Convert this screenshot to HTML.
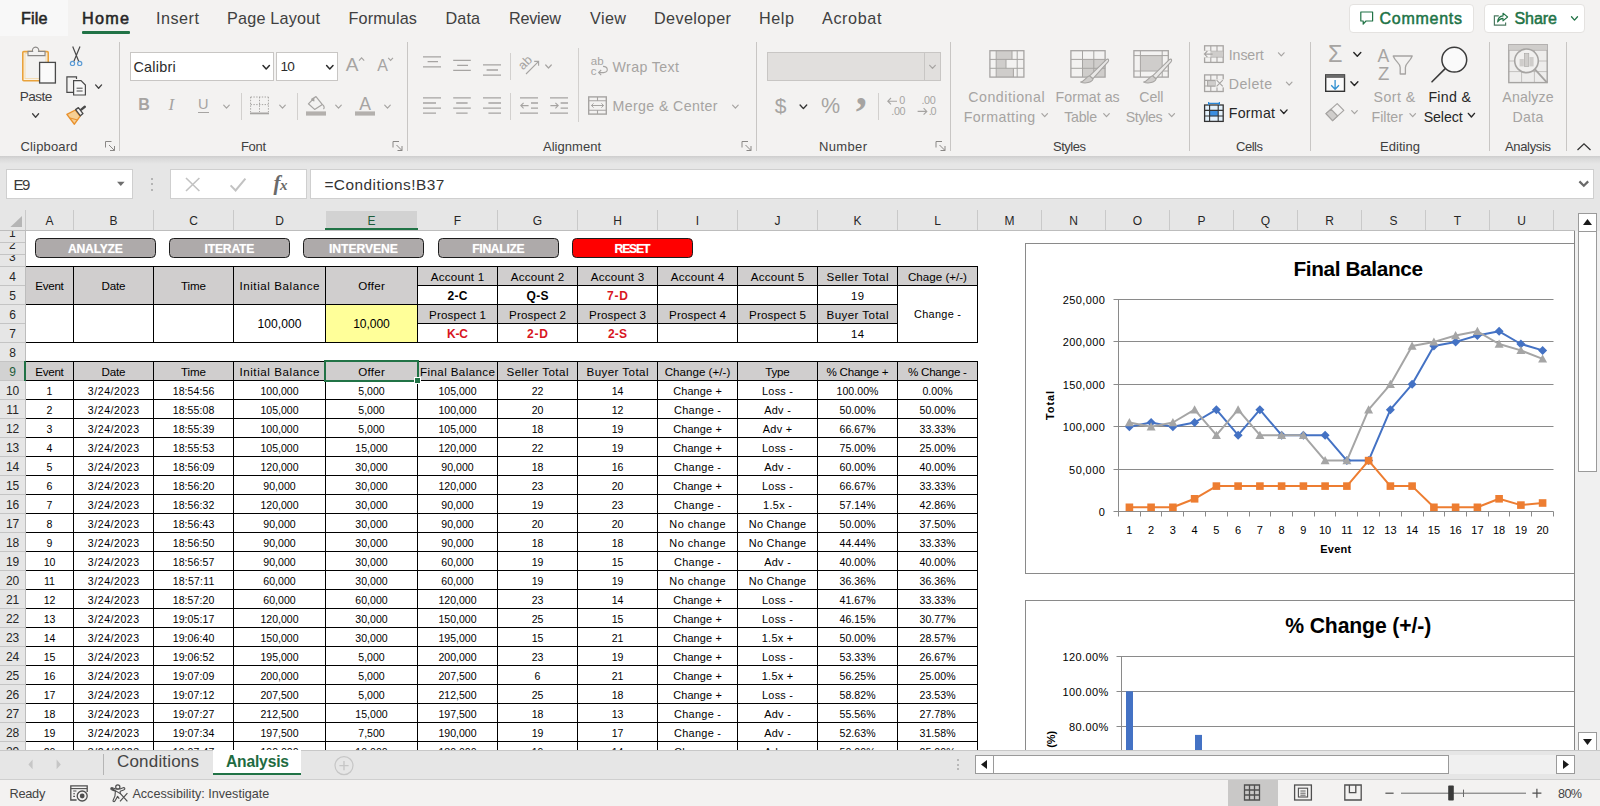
<!DOCTYPE html>
<html><head><meta charset="utf-8"><title>Analysis - Excel</title><style>
html,body{margin:0;padding:0}
body{width:1600px;height:806px;position:relative;overflow:hidden;background:#e6e6e6;font-family:"Liberation Sans",sans-serif;color:#000}
div,span,svg{position:absolute;box-sizing:border-box}
.t{white-space:nowrap;line-height:20px;height:20px}
.rel{position:static}
</style></head>
<body>
<div style="left:26px;top:231px;width:1549px;height:520px;background:#fff;"></div>
<div style="left:0px;top:207px;width:1575px;height:24px;background:#e6e6e6;"></div>
<div style="left:326px;top:211px;width:91px;height:18px;background:#d2d2d2;"></div>
<div style="left:325px;top:228px;width:93px;height:2px;background:#217346;"></div>
<span class="t" style="left:45.50px;top:210.60px;font-size:12px;color:#262626;">A</span>
<span class="t" style="left:109.50px;top:210.60px;font-size:12px;color:#262626;">B</span>
<span class="t" style="left:189.17px;top:210.60px;font-size:12px;color:#262626;">C</span>
<span class="t" style="left:275.17px;top:210.60px;font-size:12px;color:#262626;">D</span>
<span class="t" style="left:367.50px;top:210.60px;font-size:12px;color:#1e5c3a;">E</span>
<span class="t" style="left:453.83px;top:210.60px;font-size:12px;color:#262626;">F</span>
<span class="t" style="left:532.83px;top:210.60px;font-size:12px;color:#262626;">G</span>
<span class="t" style="left:613.17px;top:210.60px;font-size:12px;color:#262626;">H</span>
<span class="t" style="left:695.83px;top:210.60px;font-size:12px;color:#262626;">I</span>
<span class="t" style="left:774.50px;top:210.60px;font-size:12px;color:#262626;">J</span>
<span class="t" style="left:853.50px;top:210.60px;font-size:12px;color:#262626;">K</span>
<span class="t" style="left:934.16px;top:210.60px;font-size:12px;color:#262626;">L</span>
<span class="t" style="left:1004.50px;top:210.60px;font-size:12px;color:#262626;">M</span>
<span class="t" style="left:1069.17px;top:210.60px;font-size:12px;color:#262626;">N</span>
<span class="t" style="left:1132.83px;top:210.60px;font-size:12px;color:#262626;">O</span>
<span class="t" style="left:1197.50px;top:210.60px;font-size:12px;color:#262626;">P</span>
<span class="t" style="left:1260.83px;top:210.60px;font-size:12px;color:#262626;">Q</span>
<span class="t" style="left:1325.17px;top:210.60px;font-size:12px;color:#262626;">R</span>
<span class="t" style="left:1389.50px;top:210.60px;font-size:12px;color:#262626;">S</span>
<span class="t" style="left:1453.83px;top:210.60px;font-size:12px;color:#262626;">T</span>
<span class="t" style="left:1517.17px;top:210.60px;font-size:12px;color:#262626;">U</span>
<div style="left:25px;top:210px;width:1px;height:21px;background:#c9c9c9;"></div>
<div style="left:73px;top:210px;width:1px;height:21px;background:#c9c9c9;"></div>
<div style="left:153px;top:210px;width:1px;height:21px;background:#c9c9c9;"></div>
<div style="left:233px;top:210px;width:1px;height:21px;background:#c9c9c9;"></div>
<div style="left:497px;top:210px;width:1px;height:21px;background:#c9c9c9;"></div>
<div style="left:577px;top:210px;width:1px;height:21px;background:#c9c9c9;"></div>
<div style="left:657px;top:210px;width:1px;height:21px;background:#c9c9c9;"></div>
<div style="left:737px;top:210px;width:1px;height:21px;background:#c9c9c9;"></div>
<div style="left:817px;top:210px;width:1px;height:21px;background:#c9c9c9;"></div>
<div style="left:897px;top:210px;width:1px;height:21px;background:#c9c9c9;"></div>
<div style="left:977px;top:210px;width:1px;height:21px;background:#c9c9c9;"></div>
<div style="left:1041px;top:210px;width:1px;height:21px;background:#c9c9c9;"></div>
<div style="left:1105px;top:210px;width:1px;height:21px;background:#c9c9c9;"></div>
<div style="left:1169px;top:210px;width:1px;height:21px;background:#c9c9c9;"></div>
<div style="left:1233px;top:210px;width:1px;height:21px;background:#c9c9c9;"></div>
<div style="left:1297px;top:210px;width:1px;height:21px;background:#c9c9c9;"></div>
<div style="left:1361px;top:210px;width:1px;height:21px;background:#c9c9c9;"></div>
<div style="left:1425px;top:210px;width:1px;height:21px;background:#c9c9c9;"></div>
<div style="left:1489px;top:210px;width:1px;height:21px;background:#c9c9c9;"></div>
<div style="left:1553px;top:210px;width:1px;height:21px;background:#c9c9c9;"></div>
<div style="left:0px;top:230px;width:1575px;height:1px;background:#bdbdbd;"></div>
<svg style="left:9px;top:214px" width="14" height="14" viewBox="0 0 14 14"><path d="M13 2 L13 13 L1.4 13 Z" fill="#b5b5b5"/></svg>
<div style="left:0px;top:231px;width:25px;height:520px;background:#e6e6e6;"></div>
<div style="left:25px;top:231px;width:1px;height:520px;background:#bdbdbd;"></div>
<div style="left:0px;top:362px;width:25px;height:18px;background:#d2d2d2;"></div>
<div style="left:0px;top:242px;width:25px;height:1px;background:#c4c4c4;"></div>
<div style="left:0px;top:254px;width:25px;height:1px;background:#c4c4c4;"></div>
<div style="left:0px;top:266px;width:25px;height:1px;background:#c4c4c4;"></div>
<div style="left:0px;top:285px;width:25px;height:1px;background:#c4c4c4;"></div>
<div style="left:0px;top:304px;width:25px;height:1px;background:#c4c4c4;"></div>
<div style="left:0px;top:323px;width:25px;height:1px;background:#c4c4c4;"></div>
<div style="left:0px;top:342px;width:25px;height:1px;background:#c4c4c4;"></div>
<div style="left:0px;top:361px;width:25px;height:1px;background:#c4c4c4;"></div>
<div style="left:0px;top:380px;width:25px;height:1px;background:#c4c4c4;"></div>
<div style="left:0px;top:399px;width:25px;height:1px;background:#c4c4c4;"></div>
<div style="left:0px;top:418px;width:25px;height:1px;background:#c4c4c4;"></div>
<div style="left:0px;top:437px;width:25px;height:1px;background:#c4c4c4;"></div>
<div style="left:0px;top:456px;width:25px;height:1px;background:#c4c4c4;"></div>
<div style="left:0px;top:475px;width:25px;height:1px;background:#c4c4c4;"></div>
<div style="left:0px;top:494px;width:25px;height:1px;background:#c4c4c4;"></div>
<div style="left:0px;top:513px;width:25px;height:1px;background:#c4c4c4;"></div>
<div style="left:0px;top:532px;width:25px;height:1px;background:#c4c4c4;"></div>
<div style="left:0px;top:551px;width:25px;height:1px;background:#c4c4c4;"></div>
<div style="left:0px;top:570px;width:25px;height:1px;background:#c4c4c4;"></div>
<div style="left:0px;top:589px;width:25px;height:1px;background:#c4c4c4;"></div>
<div style="left:0px;top:608px;width:25px;height:1px;background:#c4c4c4;"></div>
<div style="left:0px;top:627px;width:25px;height:1px;background:#c4c4c4;"></div>
<div style="left:0px;top:646px;width:25px;height:1px;background:#c4c4c4;"></div>
<div style="left:0px;top:665px;width:25px;height:1px;background:#c4c4c4;"></div>
<div style="left:0px;top:684px;width:25px;height:1px;background:#c4c4c4;"></div>
<div style="left:0px;top:703px;width:25px;height:1px;background:#c4c4c4;"></div>
<div style="left:0px;top:722px;width:25px;height:1px;background:#c4c4c4;"></div>
<div style="left:0px;top:741px;width:25px;height:1px;background:#c4c4c4;"></div>
<div style="left:0px;top:760px;width:25px;height:1px;background:#c4c4c4;"></div>
<div style="left:24px;top:361px;width:2px;height:20px;background:#217346;"></div>
<div style="left:0;top:231px;width:25px;height:11px;overflow:hidden"><span class="t" style="left:9.1px;top:-7.7px;font-size:12px;color:#262626">1</span></div>
<div style="left:0;top:243px;width:25px;height:11px;overflow:hidden"><span class="t" style="left:9.1px;top:-7.7px;font-size:12px;color:#262626">2</span></div>
<div style="left:0;top:255px;width:25px;height:11px;overflow:hidden"><span class="t" style="left:9.1px;top:-7.7px;font-size:12px;color:#262626">3</span></div>
<span class="t" style="left:9.26px;top:266.50px;font-size:12px;color:#262626;">4</span>
<span class="t" style="left:9.26px;top:285.50px;font-size:12px;color:#262626;">5</span>
<span class="t" style="left:9.26px;top:304.50px;font-size:12px;color:#262626;">6</span>
<span class="t" style="left:9.26px;top:323.50px;font-size:12px;color:#262626;">7</span>
<span class="t" style="left:9.26px;top:342.50px;font-size:12px;color:#262626;">8</span>
<span class="t" style="left:9.26px;top:361.50px;font-size:12px;color:#1e5c3a;">9</span>
<span class="t" style="left:5.93px;top:380.50px;font-size:12px;color:#262626;">10</span>
<span class="t" style="left:6.37px;top:399.50px;font-size:12px;color:#262626;">11</span>
<span class="t" style="left:5.93px;top:418.50px;font-size:12px;color:#262626;">12</span>
<span class="t" style="left:5.93px;top:437.50px;font-size:12px;color:#262626;">13</span>
<span class="t" style="left:5.93px;top:456.50px;font-size:12px;color:#262626;">14</span>
<span class="t" style="left:5.93px;top:475.50px;font-size:12px;color:#262626;">15</span>
<span class="t" style="left:5.93px;top:494.50px;font-size:12px;color:#262626;">16</span>
<span class="t" style="left:5.93px;top:513.50px;font-size:12px;color:#262626;">17</span>
<span class="t" style="left:5.93px;top:532.50px;font-size:12px;color:#262626;">18</span>
<span class="t" style="left:5.93px;top:551.50px;font-size:12px;color:#262626;">19</span>
<span class="t" style="left:5.93px;top:570.50px;font-size:12px;color:#262626;">20</span>
<span class="t" style="left:5.93px;top:589.50px;font-size:12px;color:#262626;">21</span>
<span class="t" style="left:5.93px;top:608.50px;font-size:12px;color:#262626;">22</span>
<span class="t" style="left:5.93px;top:627.50px;font-size:12px;color:#262626;">23</span>
<span class="t" style="left:5.93px;top:646.50px;font-size:12px;color:#262626;">24</span>
<span class="t" style="left:5.93px;top:665.50px;font-size:12px;color:#262626;">25</span>
<span class="t" style="left:5.93px;top:684.50px;font-size:12px;color:#262626;">26</span>
<span class="t" style="left:5.93px;top:703.50px;font-size:12px;color:#262626;">27</span>
<span class="t" style="left:5.93px;top:722.50px;font-size:12px;color:#262626;">28</span>
<span class="t" style="left:5.93px;top:741.50px;font-size:12px;color:#262626;">29</span>
<div style="left:26px;top:267px;width:47px;height:37px;background:#d0cece;"></div>
<div style="left:74px;top:267px;width:79px;height:37px;background:#d0cece;"></div>
<div style="left:154px;top:267px;width:79px;height:37px;background:#d0cece;"></div>
<div style="left:234px;top:267px;width:91px;height:37px;background:#d0cece;"></div>
<div style="left:326px;top:267px;width:91px;height:37px;background:#d0cece;"></div>
<div style="left:326px;top:305px;width:91px;height:37px;background:#ffff99;"></div>
<div style="left:418px;top:267px;width:79px;height:18px;background:#d0cece;"></div>
<div style="left:418px;top:305px;width:79px;height:18px;background:#d0cece;"></div>
<div style="left:498px;top:267px;width:79px;height:18px;background:#d0cece;"></div>
<div style="left:498px;top:305px;width:79px;height:18px;background:#d0cece;"></div>
<div style="left:578px;top:267px;width:79px;height:18px;background:#d0cece;"></div>
<div style="left:578px;top:305px;width:79px;height:18px;background:#d0cece;"></div>
<div style="left:658px;top:267px;width:79px;height:18px;background:#d0cece;"></div>
<div style="left:658px;top:305px;width:79px;height:18px;background:#d0cece;"></div>
<div style="left:738px;top:267px;width:79px;height:18px;background:#d0cece;"></div>
<div style="left:738px;top:305px;width:79px;height:18px;background:#d0cece;"></div>
<div style="left:818px;top:267px;width:79px;height:18px;background:#d0cece;"></div>
<div style="left:818px;top:305px;width:79px;height:18px;background:#d0cece;"></div>
<div style="left:898px;top:267px;width:79px;height:18px;background:#d0cece;"></div>
<div style="left:26px;top:362px;width:47px;height:18px;background:#d0cece;"></div>
<div style="left:74px;top:362px;width:79px;height:18px;background:#d0cece;"></div>
<div style="left:154px;top:362px;width:79px;height:18px;background:#d0cece;"></div>
<div style="left:234px;top:362px;width:91px;height:18px;background:#d0cece;"></div>
<div style="left:326px;top:362px;width:91px;height:18px;background:#d0cece;"></div>
<div style="left:418px;top:362px;width:79px;height:18px;background:#d0cece;"></div>
<div style="left:498px;top:362px;width:79px;height:18px;background:#d0cece;"></div>
<div style="left:578px;top:362px;width:79px;height:18px;background:#d0cece;"></div>
<div style="left:658px;top:362px;width:79px;height:18px;background:#d0cece;"></div>
<div style="left:738px;top:362px;width:79px;height:18px;background:#d0cece;"></div>
<div style="left:818px;top:362px;width:79px;height:18px;background:#d0cece;"></div>
<div style="left:898px;top:362px;width:79px;height:18px;background:#d0cece;"></div>
<div style="left:26px;top:266px;width:952px;height:1px;background:#000;"></div>
<div style="left:417px;top:285px;width:561px;height:1px;background:#000;"></div>
<div style="left:26px;top:304px;width:872px;height:1px;background:#000;"></div>
<div style="left:417px;top:323px;width:481px;height:1px;background:#000;"></div>
<div style="left:26px;top:342px;width:952px;height:1px;background:#000;"></div>
<div style="left:73px;top:266px;width:1px;height:77px;background:#000;"></div>
<div style="left:153px;top:266px;width:1px;height:77px;background:#000;"></div>
<div style="left:233px;top:266px;width:1px;height:77px;background:#000;"></div>
<div style="left:325px;top:266px;width:1px;height:77px;background:#000;"></div>
<div style="left:417px;top:266px;width:1px;height:77px;background:#000;"></div>
<div style="left:497px;top:266px;width:1px;height:77px;background:#000;"></div>
<div style="left:577px;top:266px;width:1px;height:77px;background:#000;"></div>
<div style="left:657px;top:266px;width:1px;height:77px;background:#000;"></div>
<div style="left:737px;top:266px;width:1px;height:77px;background:#000;"></div>
<div style="left:817px;top:266px;width:1px;height:77px;background:#000;"></div>
<div style="left:897px;top:266px;width:1px;height:77px;background:#000;"></div>
<div style="left:977px;top:266px;width:1px;height:77px;background:#000;"></div>
<div style="left:26px;top:361px;width:952px;height:1px;background:#000;"></div>
<div style="left:26px;top:380px;width:952px;height:1px;background:#000;"></div>
<div style="left:26px;top:399px;width:952px;height:1px;background:#000;"></div>
<div style="left:26px;top:418px;width:952px;height:1px;background:#000;"></div>
<div style="left:26px;top:437px;width:952px;height:1px;background:#000;"></div>
<div style="left:26px;top:456px;width:952px;height:1px;background:#000;"></div>
<div style="left:26px;top:475px;width:952px;height:1px;background:#000;"></div>
<div style="left:26px;top:494px;width:952px;height:1px;background:#000;"></div>
<div style="left:26px;top:513px;width:952px;height:1px;background:#000;"></div>
<div style="left:26px;top:532px;width:952px;height:1px;background:#000;"></div>
<div style="left:26px;top:551px;width:952px;height:1px;background:#000;"></div>
<div style="left:26px;top:570px;width:952px;height:1px;background:#000;"></div>
<div style="left:26px;top:589px;width:952px;height:1px;background:#000;"></div>
<div style="left:26px;top:608px;width:952px;height:1px;background:#000;"></div>
<div style="left:26px;top:627px;width:952px;height:1px;background:#000;"></div>
<div style="left:26px;top:646px;width:952px;height:1px;background:#000;"></div>
<div style="left:26px;top:665px;width:952px;height:1px;background:#000;"></div>
<div style="left:26px;top:684px;width:952px;height:1px;background:#000;"></div>
<div style="left:26px;top:703px;width:952px;height:1px;background:#000;"></div>
<div style="left:26px;top:722px;width:952px;height:1px;background:#000;"></div>
<div style="left:26px;top:741px;width:952px;height:1px;background:#000;"></div>
<div style="left:73px;top:361px;width:1px;height:392px;background:#000;"></div>
<div style="left:153px;top:361px;width:1px;height:392px;background:#000;"></div>
<div style="left:233px;top:361px;width:1px;height:392px;background:#000;"></div>
<div style="left:325px;top:361px;width:1px;height:392px;background:#000;"></div>
<div style="left:417px;top:361px;width:1px;height:392px;background:#000;"></div>
<div style="left:497px;top:361px;width:1px;height:392px;background:#000;"></div>
<div style="left:577px;top:361px;width:1px;height:392px;background:#000;"></div>
<div style="left:657px;top:361px;width:1px;height:392px;background:#000;"></div>
<div style="left:737px;top:361px;width:1px;height:392px;background:#000;"></div>
<div style="left:817px;top:361px;width:1px;height:392px;background:#000;"></div>
<div style="left:897px;top:361px;width:1px;height:392px;background:#000;"></div>
<div style="left:977px;top:361px;width:1px;height:392px;background:#000;"></div>
<span class="t" style="left:35.15px;top:275.60px;font-size:11.6px;letter-spacing:-0.241px;">Event</span>
<span class="t" style="left:101.50px;top:275.60px;font-size:11.6px;letter-spacing:-0.168px;">Date</span>
<span class="t" style="left:181.00px;top:275.60px;font-size:11.6px;letter-spacing:-0.116px;">Time</span>
<span class="t" style="left:239.40px;top:275.60px;font-size:11.6px;letter-spacing:0.570px;">Initial Balance</span>
<span class="t" style="left:358.20px;top:275.60px;font-size:11.6px;letter-spacing:0.257px;">Offer</span>
<span class="t" style="left:430.85px;top:266.60px;font-size:11.6px;letter-spacing:0.214px;">Account 1</span>
<span class="t" style="left:429.00px;top:304.60px;font-size:11.6px;letter-spacing:0.172px;">Prospect 1</span>
<span class="t" style="left:510.85px;top:266.60px;font-size:11.6px;letter-spacing:0.214px;">Account 2</span>
<span class="t" style="left:509.00px;top:304.60px;font-size:11.6px;letter-spacing:0.172px;">Prospect 2</span>
<span class="t" style="left:590.85px;top:266.60px;font-size:11.6px;letter-spacing:0.214px;">Account 3</span>
<span class="t" style="left:589.00px;top:304.60px;font-size:11.6px;letter-spacing:0.172px;">Prospect 3</span>
<span class="t" style="left:670.85px;top:266.60px;font-size:11.6px;letter-spacing:0.214px;">Account 4</span>
<span class="t" style="left:669.00px;top:304.60px;font-size:11.6px;letter-spacing:0.172px;">Prospect 4</span>
<span class="t" style="left:750.85px;top:266.60px;font-size:11.6px;letter-spacing:0.214px;">Account 5</span>
<span class="t" style="left:749.00px;top:304.60px;font-size:11.6px;letter-spacing:0.172px;">Prospect 5</span>
<span class="t" style="left:826.50px;top:266.60px;font-size:11.6px;letter-spacing:0.439px;">Seller Total</span>
<span class="t" style="left:826.50px;top:304.60px;font-size:11.6px;letter-spacing:0.418px;">Buyer Total</span>
<span class="t" style="left:908.00px;top:266.60px;font-size:11.6px;">Chage (+/-)</span>
<span class="t" style="left:914.00px;top:303.50px;font-size:10.9px;letter-spacing:0.309px;">Change -</span>
<span class="t" style="left:851.00px;top:285.60px;font-size:11.3px;letter-spacing:0.431px;">19</span>
<span class="t" style="left:851.00px;top:323.60px;font-size:11.3px;letter-spacing:0.431px;">14</span>
<span class="t" style="left:447.50px;top:285.60px;font-size:12px;letter-spacing:0.332px;font-weight:bold;">2-C</span>
<span class="t" style="left:526.50px;top:285.60px;font-size:12px;letter-spacing:0.333px;font-weight:bold;">Q-S</span>
<span class="t" style="left:607.00px;top:285.60px;font-size:12px;letter-spacing:0.832px;font-weight:bold;color:#d8161f;">7-D</span>
<span class="t" style="left:447.00px;top:323.60px;font-size:12px;letter-spacing:-0.164px;font-weight:bold;color:#d8161f;">K-C</span>
<span class="t" style="left:527.00px;top:323.60px;font-size:12px;letter-spacing:0.832px;font-weight:bold;color:#d8161f;">2-D</span>
<span class="t" style="left:608.00px;top:323.60px;font-size:12px;letter-spacing:0.163px;font-weight:bold;color:#d8161f;">2-S</span>
<span class="t" style="left:257.50px;top:314.00px;font-size:12.1px;letter-spacing:0.044px;">100,000</span>
<span class="t" style="left:353.20px;top:314.00px;font-size:12.1px;letter-spacing:-0.082px;">10,000</span>
<span class="t" style="left:35.15px;top:361.60px;font-size:11.6px;letter-spacing:-0.241px;">Event</span>
<span class="t" style="left:101.50px;top:361.60px;font-size:11.6px;letter-spacing:-0.168px;">Date</span>
<span class="t" style="left:181.00px;top:361.60px;font-size:11.6px;letter-spacing:-0.116px;">Time</span>
<span class="t" style="left:239.40px;top:361.60px;font-size:11.6px;letter-spacing:0.570px;">Initial Balance</span>
<span class="t" style="left:358.20px;top:361.60px;font-size:11.6px;letter-spacing:0.257px;">Offer</span>
<span class="t" style="left:420.00px;top:361.60px;font-size:11.6px;letter-spacing:0.393px;">Final Balance</span>
<span class="t" style="left:506.50px;top:361.60px;font-size:11.6px;letter-spacing:0.439px;">Seller Total</span>
<span class="t" style="left:586.50px;top:361.60px;font-size:11.6px;letter-spacing:0.418px;">Buyer Total</span>
<span class="t" style="left:664.70px;top:361.60px;font-size:11.6px;letter-spacing:0.014px;">Change (+/-)</span>
<span class="t" style="left:765.30px;top:361.60px;font-size:11.6px;letter-spacing:-0.250px;">Type</span>
<span class="t" style="left:826.50px;top:361.60px;font-size:11.6px;letter-spacing:-0.241px;">% Change +</span>
<span class="t" style="left:908.00px;top:361.60px;font-size:11.6px;letter-spacing:-0.251px;">% Change -</span>
<span class="t" style="left:46.57px;top:380.60px;font-size:10.55px;">1</span>
<span class="t" style="left:87.85px;top:380.60px;font-size:10.55px;letter-spacing:0.546px;">3/24/2023</span>
<span class="t" style="left:172.70px;top:380.60px;font-size:10.55px;letter-spacing:0.076px;">18:54:56</span>
<span class="t" style="left:260.43px;top:380.60px;font-size:10.55px;">100,000</span>
<span class="t" style="left:358.30px;top:380.60px;font-size:10.55px;">5,000</span>
<span class="t" style="left:438.43px;top:380.60px;font-size:10.55px;">105,000</span>
<span class="t" style="left:531.63px;top:380.60px;font-size:10.55px;">22</span>
<span class="t" style="left:611.63px;top:380.60px;font-size:10.55px;">14</span>
<span class="t" style="left:673.15px;top:380.60px;font-size:10.9px;letter-spacing:0.161px;">Change +</span>
<span class="t" style="left:762.10px;top:380.60px;font-size:10.9px;letter-spacing:0.224px;">Loss -</span>
<span class="t" style="left:836.51px;top:380.60px;font-size:10.55px;letter-spacing:0.056px;">100.00%</span>
<span class="t" style="left:922.42px;top:380.60px;font-size:10.55px;letter-spacing:0.060px;">0.00%</span>
<span class="t" style="left:46.57px;top:399.60px;font-size:10.55px;">2</span>
<span class="t" style="left:87.85px;top:399.60px;font-size:10.55px;letter-spacing:0.546px;">3/24/2023</span>
<span class="t" style="left:172.70px;top:399.60px;font-size:10.55px;letter-spacing:0.076px;">18:55:08</span>
<span class="t" style="left:260.43px;top:399.60px;font-size:10.55px;">105,000</span>
<span class="t" style="left:358.30px;top:399.60px;font-size:10.55px;">5,000</span>
<span class="t" style="left:438.43px;top:399.60px;font-size:10.55px;">100,000</span>
<span class="t" style="left:531.63px;top:399.60px;font-size:10.55px;">20</span>
<span class="t" style="left:611.63px;top:399.60px;font-size:10.55px;">12</span>
<span class="t" style="left:674.00px;top:399.60px;font-size:10.9px;letter-spacing:0.309px;">Change -</span>
<span class="t" style="left:764.18px;top:399.60px;font-size:10.9px;letter-spacing:0.300px;">Adv -</span>
<span class="t" style="left:839.47px;top:399.60px;font-size:10.55px;letter-spacing:0.057px;">50.00%</span>
<span class="t" style="left:919.47px;top:399.60px;font-size:10.55px;letter-spacing:0.057px;">50.00%</span>
<span class="t" style="left:46.57px;top:418.60px;font-size:10.55px;">3</span>
<span class="t" style="left:87.85px;top:418.60px;font-size:10.55px;letter-spacing:0.546px;">3/24/2023</span>
<span class="t" style="left:172.70px;top:418.60px;font-size:10.55px;letter-spacing:0.076px;">18:55:39</span>
<span class="t" style="left:260.43px;top:418.60px;font-size:10.55px;">100,000</span>
<span class="t" style="left:358.30px;top:418.60px;font-size:10.55px;">5,000</span>
<span class="t" style="left:438.43px;top:418.60px;font-size:10.55px;">105,000</span>
<span class="t" style="left:531.63px;top:418.60px;font-size:10.55px;">18</span>
<span class="t" style="left:611.63px;top:418.60px;font-size:10.55px;">19</span>
<span class="t" style="left:673.15px;top:418.60px;font-size:10.9px;letter-spacing:0.161px;">Change +</span>
<span class="t" style="left:762.81px;top:418.60px;font-size:10.9px;letter-spacing:0.300px;">Adv +</span>
<span class="t" style="left:839.47px;top:418.60px;font-size:10.55px;letter-spacing:0.057px;">66.67%</span>
<span class="t" style="left:919.47px;top:418.60px;font-size:10.55px;letter-spacing:0.057px;">33.33%</span>
<span class="t" style="left:46.57px;top:437.60px;font-size:10.55px;">4</span>
<span class="t" style="left:87.85px;top:437.60px;font-size:10.55px;letter-spacing:0.546px;">3/24/2023</span>
<span class="t" style="left:172.70px;top:437.60px;font-size:10.55px;letter-spacing:0.076px;">18:55:53</span>
<span class="t" style="left:260.43px;top:437.60px;font-size:10.55px;">105,000</span>
<span class="t" style="left:355.37px;top:437.60px;font-size:10.55px;">15,000</span>
<span class="t" style="left:438.43px;top:437.60px;font-size:10.55px;">120,000</span>
<span class="t" style="left:531.63px;top:437.60px;font-size:10.55px;">22</span>
<span class="t" style="left:611.63px;top:437.60px;font-size:10.55px;">19</span>
<span class="t" style="left:673.15px;top:437.60px;font-size:10.9px;letter-spacing:0.161px;">Change +</span>
<span class="t" style="left:762.10px;top:437.60px;font-size:10.9px;letter-spacing:0.224px;">Loss -</span>
<span class="t" style="left:839.47px;top:437.60px;font-size:10.55px;letter-spacing:0.057px;">75.00%</span>
<span class="t" style="left:919.47px;top:437.60px;font-size:10.55px;letter-spacing:0.057px;">25.00%</span>
<span class="t" style="left:46.57px;top:456.60px;font-size:10.55px;">5</span>
<span class="t" style="left:87.85px;top:456.60px;font-size:10.55px;letter-spacing:0.546px;">3/24/2023</span>
<span class="t" style="left:172.70px;top:456.60px;font-size:10.55px;letter-spacing:0.076px;">18:56:09</span>
<span class="t" style="left:260.43px;top:456.60px;font-size:10.55px;">120,000</span>
<span class="t" style="left:355.37px;top:456.60px;font-size:10.55px;">30,000</span>
<span class="t" style="left:441.37px;top:456.60px;font-size:10.55px;">90,000</span>
<span class="t" style="left:531.63px;top:456.60px;font-size:10.55px;">18</span>
<span class="t" style="left:611.63px;top:456.60px;font-size:10.55px;">16</span>
<span class="t" style="left:674.00px;top:456.60px;font-size:10.9px;letter-spacing:0.309px;">Change -</span>
<span class="t" style="left:764.18px;top:456.60px;font-size:10.9px;letter-spacing:0.300px;">Adv -</span>
<span class="t" style="left:839.47px;top:456.60px;font-size:10.55px;letter-spacing:0.057px;">60.00%</span>
<span class="t" style="left:919.47px;top:456.60px;font-size:10.55px;letter-spacing:0.057px;">40.00%</span>
<span class="t" style="left:46.57px;top:475.60px;font-size:10.55px;">6</span>
<span class="t" style="left:87.85px;top:475.60px;font-size:10.55px;letter-spacing:0.546px;">3/24/2023</span>
<span class="t" style="left:172.70px;top:475.60px;font-size:10.55px;letter-spacing:0.076px;">18:56:20</span>
<span class="t" style="left:263.37px;top:475.60px;font-size:10.55px;">90,000</span>
<span class="t" style="left:355.37px;top:475.60px;font-size:10.55px;">30,000</span>
<span class="t" style="left:438.43px;top:475.60px;font-size:10.55px;">120,000</span>
<span class="t" style="left:531.63px;top:475.60px;font-size:10.55px;">23</span>
<span class="t" style="left:611.63px;top:475.60px;font-size:10.55px;">20</span>
<span class="t" style="left:673.15px;top:475.60px;font-size:10.9px;letter-spacing:0.161px;">Change +</span>
<span class="t" style="left:762.10px;top:475.60px;font-size:10.9px;letter-spacing:0.224px;">Loss -</span>
<span class="t" style="left:839.47px;top:475.60px;font-size:10.55px;letter-spacing:0.057px;">66.67%</span>
<span class="t" style="left:919.47px;top:475.60px;font-size:10.55px;letter-spacing:0.057px;">33.33%</span>
<span class="t" style="left:46.57px;top:494.60px;font-size:10.55px;">7</span>
<span class="t" style="left:87.85px;top:494.60px;font-size:10.55px;letter-spacing:0.546px;">3/24/2023</span>
<span class="t" style="left:172.70px;top:494.60px;font-size:10.55px;letter-spacing:0.076px;">18:56:32</span>
<span class="t" style="left:260.43px;top:494.60px;font-size:10.55px;">120,000</span>
<span class="t" style="left:355.37px;top:494.60px;font-size:10.55px;">30,000</span>
<span class="t" style="left:441.37px;top:494.60px;font-size:10.55px;">90,000</span>
<span class="t" style="left:531.63px;top:494.60px;font-size:10.55px;">19</span>
<span class="t" style="left:611.63px;top:494.60px;font-size:10.55px;">23</span>
<span class="t" style="left:674.00px;top:494.60px;font-size:10.9px;letter-spacing:0.309px;">Change -</span>
<span class="t" style="left:763.12px;top:494.60px;font-size:10.9px;letter-spacing:0.300px;">1.5x -</span>
<span class="t" style="left:839.47px;top:494.60px;font-size:10.55px;letter-spacing:0.057px;">57.14%</span>
<span class="t" style="left:919.47px;top:494.60px;font-size:10.55px;letter-spacing:0.057px;">42.86%</span>
<span class="t" style="left:46.57px;top:513.60px;font-size:10.55px;">8</span>
<span class="t" style="left:87.85px;top:513.60px;font-size:10.55px;letter-spacing:0.546px;">3/24/2023</span>
<span class="t" style="left:172.70px;top:513.60px;font-size:10.55px;letter-spacing:0.076px;">18:56:43</span>
<span class="t" style="left:263.37px;top:513.60px;font-size:10.55px;">90,000</span>
<span class="t" style="left:355.37px;top:513.60px;font-size:10.55px;">30,000</span>
<span class="t" style="left:441.37px;top:513.60px;font-size:10.55px;">90,000</span>
<span class="t" style="left:531.63px;top:513.60px;font-size:10.55px;">20</span>
<span class="t" style="left:611.63px;top:513.60px;font-size:10.55px;">20</span>
<span class="t" style="left:669.35px;top:513.60px;font-size:10.9px;letter-spacing:0.447px;">No change</span>
<span class="t" style="left:748.85px;top:513.60px;font-size:10.9px;letter-spacing:0.269px;">No Change</span>
<span class="t" style="left:839.47px;top:513.60px;font-size:10.55px;letter-spacing:0.057px;">50.00%</span>
<span class="t" style="left:919.47px;top:513.60px;font-size:10.55px;letter-spacing:0.057px;">37.50%</span>
<span class="t" style="left:46.57px;top:532.60px;font-size:10.55px;">9</span>
<span class="t" style="left:87.85px;top:532.60px;font-size:10.55px;letter-spacing:0.546px;">3/24/2023</span>
<span class="t" style="left:172.70px;top:532.60px;font-size:10.55px;letter-spacing:0.076px;">18:56:50</span>
<span class="t" style="left:263.37px;top:532.60px;font-size:10.55px;">90,000</span>
<span class="t" style="left:355.37px;top:532.60px;font-size:10.55px;">30,000</span>
<span class="t" style="left:441.37px;top:532.60px;font-size:10.55px;">90,000</span>
<span class="t" style="left:531.63px;top:532.60px;font-size:10.55px;">18</span>
<span class="t" style="left:611.63px;top:532.60px;font-size:10.55px;">18</span>
<span class="t" style="left:669.35px;top:532.60px;font-size:10.9px;letter-spacing:0.447px;">No change</span>
<span class="t" style="left:748.85px;top:532.60px;font-size:10.9px;letter-spacing:0.269px;">No Change</span>
<span class="t" style="left:839.47px;top:532.60px;font-size:10.55px;letter-spacing:0.057px;">44.44%</span>
<span class="t" style="left:919.47px;top:532.60px;font-size:10.55px;letter-spacing:0.057px;">33.33%</span>
<span class="t" style="left:43.63px;top:551.60px;font-size:10.55px;">10</span>
<span class="t" style="left:87.85px;top:551.60px;font-size:10.55px;letter-spacing:0.546px;">3/24/2023</span>
<span class="t" style="left:172.70px;top:551.60px;font-size:10.55px;letter-spacing:0.076px;">18:56:57</span>
<span class="t" style="left:263.37px;top:551.60px;font-size:10.55px;">90,000</span>
<span class="t" style="left:355.37px;top:551.60px;font-size:10.55px;">30,000</span>
<span class="t" style="left:441.37px;top:551.60px;font-size:10.55px;">60,000</span>
<span class="t" style="left:531.63px;top:551.60px;font-size:10.55px;">19</span>
<span class="t" style="left:611.63px;top:551.60px;font-size:10.55px;">15</span>
<span class="t" style="left:674.00px;top:551.60px;font-size:10.9px;letter-spacing:0.309px;">Change -</span>
<span class="t" style="left:764.18px;top:551.60px;font-size:10.9px;letter-spacing:0.300px;">Adv -</span>
<span class="t" style="left:839.47px;top:551.60px;font-size:10.55px;letter-spacing:0.057px;">40.00%</span>
<span class="t" style="left:919.47px;top:551.60px;font-size:10.55px;letter-spacing:0.057px;">40.00%</span>
<span class="t" style="left:44.02px;top:570.60px;font-size:10.55px;">11</span>
<span class="t" style="left:87.85px;top:570.60px;font-size:10.55px;letter-spacing:0.546px;">3/24/2023</span>
<span class="t" style="left:172.70px;top:570.60px;font-size:10.55px;letter-spacing:0.188px;">18:57:11</span>
<span class="t" style="left:263.37px;top:570.60px;font-size:10.55px;">60,000</span>
<span class="t" style="left:355.37px;top:570.60px;font-size:10.55px;">30,000</span>
<span class="t" style="left:441.37px;top:570.60px;font-size:10.55px;">60,000</span>
<span class="t" style="left:531.63px;top:570.60px;font-size:10.55px;">19</span>
<span class="t" style="left:611.63px;top:570.60px;font-size:10.55px;">19</span>
<span class="t" style="left:669.35px;top:570.60px;font-size:10.9px;letter-spacing:0.447px;">No change</span>
<span class="t" style="left:748.85px;top:570.60px;font-size:10.9px;letter-spacing:0.269px;">No Change</span>
<span class="t" style="left:839.47px;top:570.60px;font-size:10.55px;letter-spacing:0.057px;">36.36%</span>
<span class="t" style="left:919.47px;top:570.60px;font-size:10.55px;letter-spacing:0.057px;">36.36%</span>
<span class="t" style="left:43.63px;top:589.60px;font-size:10.55px;">12</span>
<span class="t" style="left:87.85px;top:589.60px;font-size:10.55px;letter-spacing:0.546px;">3/24/2023</span>
<span class="t" style="left:172.70px;top:589.60px;font-size:10.55px;letter-spacing:0.076px;">18:57:20</span>
<span class="t" style="left:263.37px;top:589.60px;font-size:10.55px;">60,000</span>
<span class="t" style="left:355.37px;top:589.60px;font-size:10.55px;">60,000</span>
<span class="t" style="left:438.43px;top:589.60px;font-size:10.55px;">120,000</span>
<span class="t" style="left:531.63px;top:589.60px;font-size:10.55px;">23</span>
<span class="t" style="left:611.63px;top:589.60px;font-size:10.55px;">14</span>
<span class="t" style="left:673.15px;top:589.60px;font-size:10.9px;letter-spacing:0.161px;">Change +</span>
<span class="t" style="left:762.10px;top:589.60px;font-size:10.9px;letter-spacing:0.224px;">Loss -</span>
<span class="t" style="left:839.47px;top:589.60px;font-size:10.55px;letter-spacing:0.057px;">41.67%</span>
<span class="t" style="left:919.47px;top:589.60px;font-size:10.55px;letter-spacing:0.057px;">33.33%</span>
<span class="t" style="left:43.63px;top:608.60px;font-size:10.55px;">13</span>
<span class="t" style="left:87.85px;top:608.60px;font-size:10.55px;letter-spacing:0.546px;">3/24/2023</span>
<span class="t" style="left:172.70px;top:608.60px;font-size:10.55px;letter-spacing:0.076px;">19:05:17</span>
<span class="t" style="left:260.43px;top:608.60px;font-size:10.55px;">120,000</span>
<span class="t" style="left:355.37px;top:608.60px;font-size:10.55px;">30,000</span>
<span class="t" style="left:438.43px;top:608.60px;font-size:10.55px;">150,000</span>
<span class="t" style="left:531.63px;top:608.60px;font-size:10.55px;">25</span>
<span class="t" style="left:611.63px;top:608.60px;font-size:10.55px;">15</span>
<span class="t" style="left:673.15px;top:608.60px;font-size:10.9px;letter-spacing:0.161px;">Change +</span>
<span class="t" style="left:762.10px;top:608.60px;font-size:10.9px;letter-spacing:0.224px;">Loss -</span>
<span class="t" style="left:839.47px;top:608.60px;font-size:10.55px;letter-spacing:0.057px;">46.15%</span>
<span class="t" style="left:919.47px;top:608.60px;font-size:10.55px;letter-spacing:0.057px;">30.77%</span>
<span class="t" style="left:43.63px;top:627.60px;font-size:10.55px;">14</span>
<span class="t" style="left:87.85px;top:627.60px;font-size:10.55px;letter-spacing:0.546px;">3/24/2023</span>
<span class="t" style="left:172.70px;top:627.60px;font-size:10.55px;letter-spacing:0.076px;">19:06:40</span>
<span class="t" style="left:260.43px;top:627.60px;font-size:10.55px;">150,000</span>
<span class="t" style="left:355.37px;top:627.60px;font-size:10.55px;">30,000</span>
<span class="t" style="left:438.43px;top:627.60px;font-size:10.55px;">195,000</span>
<span class="t" style="left:531.63px;top:627.60px;font-size:10.55px;">15</span>
<span class="t" style="left:611.63px;top:627.60px;font-size:10.55px;">21</span>
<span class="t" style="left:673.15px;top:627.60px;font-size:10.9px;letter-spacing:0.161px;">Change +</span>
<span class="t" style="left:761.75px;top:627.60px;font-size:10.9px;letter-spacing:0.300px;">1.5x +</span>
<span class="t" style="left:839.47px;top:627.60px;font-size:10.55px;letter-spacing:0.057px;">50.00%</span>
<span class="t" style="left:919.47px;top:627.60px;font-size:10.55px;letter-spacing:0.057px;">28.57%</span>
<span class="t" style="left:43.63px;top:646.60px;font-size:10.55px;">15</span>
<span class="t" style="left:87.85px;top:646.60px;font-size:10.55px;letter-spacing:0.546px;">3/24/2023</span>
<span class="t" style="left:172.70px;top:646.60px;font-size:10.55px;letter-spacing:0.076px;">19:06:52</span>
<span class="t" style="left:260.43px;top:646.60px;font-size:10.55px;">195,000</span>
<span class="t" style="left:358.30px;top:646.60px;font-size:10.55px;">5,000</span>
<span class="t" style="left:438.43px;top:646.60px;font-size:10.55px;">200,000</span>
<span class="t" style="left:531.63px;top:646.60px;font-size:10.55px;">23</span>
<span class="t" style="left:611.63px;top:646.60px;font-size:10.55px;">19</span>
<span class="t" style="left:673.15px;top:646.60px;font-size:10.9px;letter-spacing:0.161px;">Change +</span>
<span class="t" style="left:762.10px;top:646.60px;font-size:10.9px;letter-spacing:0.224px;">Loss -</span>
<span class="t" style="left:839.47px;top:646.60px;font-size:10.55px;letter-spacing:0.057px;">53.33%</span>
<span class="t" style="left:919.47px;top:646.60px;font-size:10.55px;letter-spacing:0.057px;">26.67%</span>
<span class="t" style="left:43.63px;top:665.60px;font-size:10.55px;">16</span>
<span class="t" style="left:87.85px;top:665.60px;font-size:10.55px;letter-spacing:0.546px;">3/24/2023</span>
<span class="t" style="left:172.70px;top:665.60px;font-size:10.55px;letter-spacing:0.076px;">19:07:09</span>
<span class="t" style="left:260.43px;top:665.60px;font-size:10.55px;">200,000</span>
<span class="t" style="left:358.30px;top:665.60px;font-size:10.55px;">5,000</span>
<span class="t" style="left:438.43px;top:665.60px;font-size:10.55px;">207,500</span>
<span class="t" style="left:534.57px;top:665.60px;font-size:10.55px;">6</span>
<span class="t" style="left:611.63px;top:665.60px;font-size:10.55px;">21</span>
<span class="t" style="left:673.15px;top:665.60px;font-size:10.9px;letter-spacing:0.161px;">Change +</span>
<span class="t" style="left:761.75px;top:665.60px;font-size:10.9px;letter-spacing:0.300px;">1.5x +</span>
<span class="t" style="left:839.47px;top:665.60px;font-size:10.55px;letter-spacing:0.057px;">56.25%</span>
<span class="t" style="left:919.47px;top:665.60px;font-size:10.55px;letter-spacing:0.057px;">25.00%</span>
<span class="t" style="left:43.63px;top:684.60px;font-size:10.55px;">17</span>
<span class="t" style="left:87.85px;top:684.60px;font-size:10.55px;letter-spacing:0.546px;">3/24/2023</span>
<span class="t" style="left:172.70px;top:684.60px;font-size:10.55px;letter-spacing:0.076px;">19:07:12</span>
<span class="t" style="left:260.43px;top:684.60px;font-size:10.55px;">207,500</span>
<span class="t" style="left:358.30px;top:684.60px;font-size:10.55px;">5,000</span>
<span class="t" style="left:438.43px;top:684.60px;font-size:10.55px;">212,500</span>
<span class="t" style="left:531.63px;top:684.60px;font-size:10.55px;">25</span>
<span class="t" style="left:611.63px;top:684.60px;font-size:10.55px;">18</span>
<span class="t" style="left:673.15px;top:684.60px;font-size:10.9px;letter-spacing:0.161px;">Change +</span>
<span class="t" style="left:762.10px;top:684.60px;font-size:10.9px;letter-spacing:0.224px;">Loss -</span>
<span class="t" style="left:839.47px;top:684.60px;font-size:10.55px;letter-spacing:0.057px;">58.82%</span>
<span class="t" style="left:919.47px;top:684.60px;font-size:10.55px;letter-spacing:0.057px;">23.53%</span>
<span class="t" style="left:43.63px;top:703.60px;font-size:10.55px;">18</span>
<span class="t" style="left:87.85px;top:703.60px;font-size:10.55px;letter-spacing:0.546px;">3/24/2023</span>
<span class="t" style="left:172.70px;top:703.60px;font-size:10.55px;letter-spacing:0.076px;">19:07:27</span>
<span class="t" style="left:260.43px;top:703.60px;font-size:10.55px;">212,500</span>
<span class="t" style="left:355.37px;top:703.60px;font-size:10.55px;">15,000</span>
<span class="t" style="left:438.43px;top:703.60px;font-size:10.55px;">197,500</span>
<span class="t" style="left:531.63px;top:703.60px;font-size:10.55px;">18</span>
<span class="t" style="left:611.63px;top:703.60px;font-size:10.55px;">13</span>
<span class="t" style="left:674.00px;top:703.60px;font-size:10.9px;letter-spacing:0.309px;">Change -</span>
<span class="t" style="left:764.18px;top:703.60px;font-size:10.9px;letter-spacing:0.300px;">Adv -</span>
<span class="t" style="left:839.47px;top:703.60px;font-size:10.55px;letter-spacing:0.057px;">55.56%</span>
<span class="t" style="left:919.47px;top:703.60px;font-size:10.55px;letter-spacing:0.057px;">27.78%</span>
<span class="t" style="left:43.63px;top:722.60px;font-size:10.55px;">19</span>
<span class="t" style="left:87.85px;top:722.60px;font-size:10.55px;letter-spacing:0.546px;">3/24/2023</span>
<span class="t" style="left:172.70px;top:722.60px;font-size:10.55px;letter-spacing:0.076px;">19:07:34</span>
<span class="t" style="left:260.43px;top:722.60px;font-size:10.55px;">197,500</span>
<span class="t" style="left:358.30px;top:722.60px;font-size:10.55px;">7,500</span>
<span class="t" style="left:438.43px;top:722.60px;font-size:10.55px;">190,000</span>
<span class="t" style="left:531.63px;top:722.60px;font-size:10.55px;">19</span>
<span class="t" style="left:611.63px;top:722.60px;font-size:10.55px;">17</span>
<span class="t" style="left:674.00px;top:722.60px;font-size:10.9px;letter-spacing:0.309px;">Change -</span>
<span class="t" style="left:764.18px;top:722.60px;font-size:10.9px;letter-spacing:0.300px;">Adv -</span>
<span class="t" style="left:839.47px;top:722.60px;font-size:10.55px;letter-spacing:0.057px;">52.63%</span>
<span class="t" style="left:919.47px;top:722.60px;font-size:10.55px;letter-spacing:0.057px;">31.58%</span>
<span class="t" style="left:43.63px;top:741.60px;font-size:10.55px;">20</span>
<span class="t" style="left:87.85px;top:741.60px;font-size:10.55px;letter-spacing:0.546px;">3/24/2023</span>
<span class="t" style="left:172.70px;top:741.60px;font-size:10.55px;letter-spacing:0.076px;">19:07:47</span>
<span class="t" style="left:260.43px;top:741.60px;font-size:10.55px;">190,000</span>
<span class="t" style="left:355.37px;top:741.60px;font-size:10.55px;">10,000</span>
<span class="t" style="left:438.43px;top:741.60px;font-size:10.55px;">180,000</span>
<span class="t" style="left:531.63px;top:741.60px;font-size:10.55px;">19</span>
<span class="t" style="left:611.63px;top:741.60px;font-size:10.55px;">14</span>
<span class="t" style="left:674.00px;top:741.60px;font-size:10.9px;letter-spacing:0.309px;">Change -</span>
<span class="t" style="left:764.18px;top:741.60px;font-size:10.9px;letter-spacing:0.300px;">Adv -</span>
<span class="t" style="left:839.47px;top:741.60px;font-size:10.55px;letter-spacing:0.057px;">50.00%</span>
<span class="t" style="left:919.47px;top:741.60px;font-size:10.55px;letter-spacing:0.057px;">25.00%</span>
<div style="left:324px;top:360px;width:95px;height:22px;border:2px solid #217346"></div>
<div style="left:414px;top:377px;width:7px;height:7px;background:#fff;"></div>
<div style="left:415px;top:378px;width:5px;height:5px;background:#217346;"></div>
<div style="left:35px;top:238px;width:121px;height:20px;background:#aeaaaa;border:1.4px solid #1c1c1c;border-radius:4.5px"></div>
<span class="t" style="left:68.00px;top:238.60px;font-size:12.2px;letter-spacing:-0.248px;font-weight:bold;color:#fff;text-shadow:0 0 1px rgba(255,255,255,.5);">ANALYZE</span>
<div style="left:169px;top:238px;width:121px;height:20px;background:#aeaaaa;border:1.4px solid #1c1c1c;border-radius:4.5px"></div>
<span class="t" style="left:204.50px;top:238.60px;font-size:12.2px;letter-spacing:-0.214px;font-weight:bold;color:#fff;text-shadow:0 0 1px rgba(255,255,255,.5);">ITERATE</span>
<div style="left:303px;top:238px;width:121px;height:20px;background:#aeaaaa;border:1.4px solid #1c1c1c;border-radius:4.5px"></div>
<span class="t" style="left:329.00px;top:238.60px;font-size:12.2px;letter-spacing:-0.075px;font-weight:bold;color:#fff;text-shadow:0 0 1px rgba(255,255,255,.5);">INTERVENE</span>
<div style="left:438px;top:238px;width:121px;height:20px;background:#aeaaaa;border:1.4px solid #1c1c1c;border-radius:4.5px"></div>
<span class="t" style="left:472.25px;top:238.60px;font-size:12.2px;letter-spacing:-0.342px;font-weight:bold;color:#fff;text-shadow:0 0 1px rgba(255,255,255,.5);">FINALIZE</span>
<div style="left:572px;top:238px;width:121px;height:20px;background:#ff0000;border:1.4px solid #1c1c1c;border-radius:4.5px"></div>
<span class="t" style="left:614.50px;top:238.60px;font-size:12.2px;letter-spacing:-1.169px;font-weight:bold;color:#fff;text-shadow:0 0 1px rgba(255,255,255,.5);">RESET</span>
<svg style="left:1025px;top:243px" width="700" height="331" viewBox="0 0 700 331" font-family="Liberation Sans, sans-serif"><rect x="0.5" y="0.5" width="699" height="330" fill="#fff" stroke="#8a8a8a"/><path d="M88.5 268.5 H528.5" stroke="#8a8a8a" stroke-width="1" fill="none"/><text x="79.79999999999995" y="272.5" font-size="11" text-anchor="end" textLength="6.5" lengthAdjust="spacing">0</text><path d="M88.5 226.5 H528.5" stroke="#8a8a8a" stroke-width="1" fill="none"/><text x="79.79999999999995" y="230.5" font-size="11" text-anchor="end" textLength="35.7" lengthAdjust="spacing">50,000</text><path d="M88.5 183.5 H528.5" stroke="#8a8a8a" stroke-width="1" fill="none"/><text x="79.79999999999995" y="187.5" font-size="11" text-anchor="end" textLength="42.1" lengthAdjust="spacing">100,000</text><path d="M88.5 141.5 H528.5" stroke="#8a8a8a" stroke-width="1" fill="none"/><text x="79.79999999999995" y="145.5" font-size="11" text-anchor="end" textLength="42.1" lengthAdjust="spacing">150,000</text><path d="M88.5 98.5 H528.5" stroke="#8a8a8a" stroke-width="1" fill="none"/><text x="79.79999999999995" y="102.5" font-size="11" text-anchor="end" textLength="42.1" lengthAdjust="spacing">200,000</text><path d="M88.5 56.5 H528.5" stroke="#8a8a8a" stroke-width="1" fill="none"/><text x="79.79999999999995" y="60.5" font-size="11" text-anchor="end" textLength="42.1" lengthAdjust="spacing">250,000</text><path d="M93.5 56.5 V273.5" stroke="#8a8a8a" fill="none"/><path d="M115.5 268.5 v5" stroke="#8a8a8a" fill="none"/><path d="M136.5 268.5 v5" stroke="#8a8a8a" fill="none"/><path d="M158.5 268.5 v5" stroke="#8a8a8a" fill="none"/><path d="M180.5 268.5 v5" stroke="#8a8a8a" fill="none"/><path d="M202.5 268.5 v5" stroke="#8a8a8a" fill="none"/><path d="M224.5 268.5 v5" stroke="#8a8a8a" fill="none"/><path d="M245.5 268.5 v5" stroke="#8a8a8a" fill="none"/><path d="M267.5 268.5 v5" stroke="#8a8a8a" fill="none"/><path d="M289.5 268.5 v5" stroke="#8a8a8a" fill="none"/><path d="M310.5 268.5 v5" stroke="#8a8a8a" fill="none"/><path d="M332.5 268.5 v5" stroke="#8a8a8a" fill="none"/><path d="M354.5 268.5 v5" stroke="#8a8a8a" fill="none"/><path d="M376.5 268.5 v5" stroke="#8a8a8a" fill="none"/><path d="M398.5 268.5 v5" stroke="#8a8a8a" fill="none"/><path d="M419.5 268.5 v5" stroke="#8a8a8a" fill="none"/><path d="M441.5 268.5 v5" stroke="#8a8a8a" fill="none"/><path d="M463.5 268.5 v5" stroke="#8a8a8a" fill="none"/><path d="M484.5 268.5 v5" stroke="#8a8a8a" fill="none"/><path d="M506.5 268.5 v5" stroke="#8a8a8a" fill="none"/><path d="M528.5 268.5 v5" stroke="#8a8a8a" fill="none"/><text x="104.4" y="290.5" font-size="11" text-anchor="middle">1</text><text x="126.1" y="290.5" font-size="11" text-anchor="middle">2</text><text x="147.9" y="290.5" font-size="11" text-anchor="middle">3</text><text x="169.6" y="290.5" font-size="11" text-anchor="middle">4</text><text x="191.4" y="290.5" font-size="11" text-anchor="middle">5</text><text x="213.1" y="290.5" font-size="11" text-anchor="middle">6</text><text x="234.9" y="290.5" font-size="11" text-anchor="middle">7</text><text x="256.6" y="290.5" font-size="11" text-anchor="middle">8</text><text x="278.4" y="290.5" font-size="11" text-anchor="middle">9</text><text x="300.1" y="290.5" font-size="11" text-anchor="middle">10</text><text x="321.9" y="290.5" font-size="11" text-anchor="middle">11</text><text x="343.6" y="290.5" font-size="11" text-anchor="middle">12</text><text x="365.4" y="290.5" font-size="11" text-anchor="middle">13</text><text x="387.1" y="290.5" font-size="11" text-anchor="middle">14</text><text x="408.9" y="290.5" font-size="11" text-anchor="middle">15</text><text x="430.6" y="290.5" font-size="11" text-anchor="middle">16</text><text x="452.4" y="290.5" font-size="11" text-anchor="middle">17</text><text x="474.1" y="290.5" font-size="11" text-anchor="middle">18</text><text x="495.9" y="290.5" font-size="11" text-anchor="middle">19</text><text x="517.6" y="290.5" font-size="11" text-anchor="middle">20</text><polyline points="104.4,183.7 126.1,179.5 147.9,183.7 169.6,179.5 191.4,166.7 213.1,192.2 234.9,166.7 256.6,192.2 278.4,192.2 300.1,192.2 321.9,217.6 343.6,217.6 365.4,166.7 387.1,141.3 408.9,103.1 430.6,98.9 452.4,92.5 474.1,88.3 495.9,101.0 517.6,107.4" fill="none" stroke="#4472c4" stroke-width="2" stroke-linejoin="round"/><path d="M104.4 179.2 l4.5 4.5 l-4.5 4.5 l-4.5 -4.5 Z" fill="#4472c4"/><path d="M126.1 175.0 l4.5 4.5 l-4.5 4.5 l-4.5 -4.5 Z" fill="#4472c4"/><path d="M147.9 179.2 l4.5 4.5 l-4.5 4.5 l-4.5 -4.5 Z" fill="#4472c4"/><path d="M169.6 175.0 l4.5 4.5 l-4.5 4.5 l-4.5 -4.5 Z" fill="#4472c4"/><path d="M191.4 162.2 l4.5 4.5 l-4.5 4.5 l-4.5 -4.5 Z" fill="#4472c4"/><path d="M213.1 187.7 l4.5 4.5 l-4.5 4.5 l-4.5 -4.5 Z" fill="#4472c4"/><path d="M234.9 162.2 l4.5 4.5 l-4.5 4.5 l-4.5 -4.5 Z" fill="#4472c4"/><path d="M256.6 187.7 l4.5 4.5 l-4.5 4.5 l-4.5 -4.5 Z" fill="#4472c4"/><path d="M278.4 187.7 l4.5 4.5 l-4.5 4.5 l-4.5 -4.5 Z" fill="#4472c4"/><path d="M300.1 187.7 l4.5 4.5 l-4.5 4.5 l-4.5 -4.5 Z" fill="#4472c4"/><path d="M321.9 213.1 l4.5 4.5 l-4.5 4.5 l-4.5 -4.5 Z" fill="#4472c4"/><path d="M343.6 213.1 l4.5 4.5 l-4.5 4.5 l-4.5 -4.5 Z" fill="#4472c4"/><path d="M365.4 162.2 l4.5 4.5 l-4.5 4.5 l-4.5 -4.5 Z" fill="#4472c4"/><path d="M387.1 136.8 l4.5 4.5 l-4.5 4.5 l-4.5 -4.5 Z" fill="#4472c4"/><path d="M408.9 98.6 l4.5 4.5 l-4.5 4.5 l-4.5 -4.5 Z" fill="#4472c4"/><path d="M430.6 94.4 l4.5 4.5 l-4.5 4.5 l-4.5 -4.5 Z" fill="#4472c4"/><path d="M452.4 88.0 l4.5 4.5 l-4.5 4.5 l-4.5 -4.5 Z" fill="#4472c4"/><path d="M474.1 83.8 l4.5 4.5 l-4.5 4.5 l-4.5 -4.5 Z" fill="#4472c4"/><path d="M495.9 96.5 l4.5 4.5 l-4.5 4.5 l-4.5 -4.5 Z" fill="#4472c4"/><path d="M517.6 102.9 l4.5 4.5 l-4.5 4.5 l-4.5 -4.5 Z" fill="#4472c4"/><polyline points="104.4,264.3 126.1,264.3 147.9,264.3 169.6,255.8 191.4,243.1 213.1,243.1 234.9,243.1 256.6,243.1 278.4,243.1 300.1,243.1 321.9,243.1 343.6,217.6 365.4,243.1 387.1,243.1 408.9,264.3 430.6,264.3 452.4,264.3 474.1,255.8 495.9,262.1 517.6,260.0" fill="none" stroke="#ed7d31" stroke-width="2" stroke-linejoin="round"/><rect x="100.6" y="260.5" width="7.6" height="7.6" fill="#ed7d31"/><rect x="122.3" y="260.5" width="7.6" height="7.6" fill="#ed7d31"/><rect x="144.1" y="260.5" width="7.6" height="7.6" fill="#ed7d31"/><rect x="165.8" y="252.0" width="7.6" height="7.6" fill="#ed7d31"/><rect x="187.6" y="239.3" width="7.6" height="7.6" fill="#ed7d31"/><rect x="209.3" y="239.3" width="7.6" height="7.6" fill="#ed7d31"/><rect x="231.1" y="239.3" width="7.6" height="7.6" fill="#ed7d31"/><rect x="252.8" y="239.3" width="7.6" height="7.6" fill="#ed7d31"/><rect x="274.6" y="239.3" width="7.6" height="7.6" fill="#ed7d31"/><rect x="296.3" y="239.3" width="7.6" height="7.6" fill="#ed7d31"/><rect x="318.1" y="239.3" width="7.6" height="7.6" fill="#ed7d31"/><rect x="339.8" y="213.8" width="7.6" height="7.6" fill="#ed7d31"/><rect x="361.6" y="239.3" width="7.6" height="7.6" fill="#ed7d31"/><rect x="383.3" y="239.3" width="7.6" height="7.6" fill="#ed7d31"/><rect x="405.1" y="260.5" width="7.6" height="7.6" fill="#ed7d31"/><rect x="426.8" y="260.5" width="7.6" height="7.6" fill="#ed7d31"/><rect x="448.6" y="260.5" width="7.6" height="7.6" fill="#ed7d31"/><rect x="470.3" y="252.0" width="7.6" height="7.6" fill="#ed7d31"/><rect x="492.1" y="258.3" width="7.6" height="7.6" fill="#ed7d31"/><rect x="513.8" y="256.2" width="7.6" height="7.6" fill="#ed7d31"/><polyline points="104.4,179.5 126.1,183.7 147.9,179.5 169.6,166.7 191.4,192.2 213.1,166.7 234.9,192.2 256.6,192.2 278.4,192.2 300.1,217.6 321.9,217.6 343.6,166.7 365.4,141.3 387.1,103.1 408.9,98.9 430.6,92.5 452.4,88.3 474.1,101.0 495.9,107.4 517.6,115.9" fill="none" stroke="#a5a5a5" stroke-width="2" stroke-linejoin="round"/><path d="M104.4 175.0 l4.5 8.2 h-9 Z" fill="#a5a5a5"/><path d="M126.1 179.2 l4.5 8.2 h-9 Z" fill="#a5a5a5"/><path d="M147.9 175.0 l4.5 8.2 h-9 Z" fill="#a5a5a5"/><path d="M169.6 162.2 l4.5 8.2 h-9 Z" fill="#a5a5a5"/><path d="M191.4 187.7 l4.5 8.2 h-9 Z" fill="#a5a5a5"/><path d="M213.1 162.2 l4.5 8.2 h-9 Z" fill="#a5a5a5"/><path d="M234.9 187.7 l4.5 8.2 h-9 Z" fill="#a5a5a5"/><path d="M256.6 187.7 l4.5 8.2 h-9 Z" fill="#a5a5a5"/><path d="M278.4 187.7 l4.5 8.2 h-9 Z" fill="#a5a5a5"/><path d="M300.1 213.1 l4.5 8.2 h-9 Z" fill="#a5a5a5"/><path d="M321.9 213.1 l4.5 8.2 h-9 Z" fill="#a5a5a5"/><path d="M343.6 162.2 l4.5 8.2 h-9 Z" fill="#a5a5a5"/><path d="M365.4 136.8 l4.5 8.2 h-9 Z" fill="#a5a5a5"/><path d="M387.1 98.6 l4.5 8.2 h-9 Z" fill="#a5a5a5"/><path d="M408.9 94.4 l4.5 8.2 h-9 Z" fill="#a5a5a5"/><path d="M430.6 88.0 l4.5 8.2 h-9 Z" fill="#a5a5a5"/><path d="M452.4 83.8 l4.5 8.2 h-9 Z" fill="#a5a5a5"/><path d="M474.1 96.5 l4.5 8.2 h-9 Z" fill="#a5a5a5"/><path d="M495.9 102.9 l4.5 8.2 h-9 Z" fill="#a5a5a5"/><path d="M517.6 111.4 l4.5 8.2 h-9 Z" fill="#a5a5a5"/><text x="333.20000000000005" y="32.80000000000001" font-size="20.8" font-weight="bold" text-anchor="middle" textLength="129.6" lengthAdjust="spacing">Final Balance</text><text x="310.70000000000005" y="310.29999999999995" font-size="11" font-weight="bold" text-anchor="middle" textLength="31" lengthAdjust="spacing">Event</text><text transform="translate(29.299999999999955 162.5) rotate(-90)" font-size="11" font-weight="bold" text-anchor="middle" textLength="29" lengthAdjust="spacing">Total</text></svg>
<svg style="left:1025px;top:600px" width="700" height="331" viewBox="0 0 700 331" font-family="Liberation Sans, sans-serif"><rect x="0.5" y="0.5" width="699" height="330" fill="#fff" stroke="#8a8a8a"/><path d="M91.5 56.5 H680" stroke="#8a8a8a" fill="none"/><text x="83.20000000000005" y="60.5" font-size="11" text-anchor="end" textLength="45.6" lengthAdjust="spacing">120.00%</text><path d="M91.5 91.5 H680" stroke="#8a8a8a" fill="none"/><text x="83.20000000000005" y="95.5" font-size="11" text-anchor="end" textLength="45.6" lengthAdjust="spacing">100.00%</text><path d="M91.5 126.5 H680" stroke="#8a8a8a" fill="none"/><text x="83.20000000000005" y="130.5" font-size="11" text-anchor="end" textLength="39.2" lengthAdjust="spacing">80.00%</text><path d="M91.5 161.5 H680" stroke="#8a8a8a" fill="none"/><text x="83.20000000000005" y="165.5" font-size="11" text-anchor="end" textLength="39.2" lengthAdjust="spacing">60.00%</text><path d="M91.5 195.5 H680" stroke="#8a8a8a" fill="none"/><text x="83.20000000000005" y="199.5" font-size="11" text-anchor="end" textLength="39.2" lengthAdjust="spacing">40.00%</text><path d="M91.5 230.5 H680" stroke="#8a8a8a" fill="none"/><text x="83.20000000000005" y="234.5" font-size="11" text-anchor="end" textLength="39.2" lengthAdjust="spacing">20.00%</text><path d="M91.5 265.5 H680" stroke="#8a8a8a" fill="none"/><text x="83.20000000000005" y="269.5" font-size="11" text-anchor="end" textLength="32.7" lengthAdjust="spacing">0.00%</text><path d="M96.5 56.5 V265.6" stroke="#8a8a8a" fill="none"/><rect x="101.0" y="91.3" width="7" height="174.3" fill="#4472c4"/><rect x="108.0" y="265.6" width="7" height="0.0" fill="#ed7d31"/><rect x="170.0" y="134.9" width="7" height="130.7" fill="#4472c4"/><rect x="177.0" y="222.0" width="7" height="43.6" fill="#ed7d31"/><text x="333.20000000000005" y="32.80000000000005" font-size="21.2" font-weight="bold" text-anchor="middle" textLength="146" lengthAdjust="spacing">% Change (+/-)</text><text transform="translate(30 139.29999999999995) rotate(-90)" font-size="11" font-weight="bold" text-anchor="middle">(%)</text></svg>
<div style="left:1575px;top:207px;width:25px;height:24px;background:#e6e6e6;"></div>
<div style="left:1575px;top:231px;width:25px;height:520px;background:#f0f0f0;"></div>
<div style="left:1574px;top:231px;width:1px;height:520px;background:#858585;"></div>
<div style="left:1578px;top:213px;width:19px;height:19px;background:#fff;border:1px solid #9a9a9a"></div>
<svg style="left:1582px;top:218px" width="11" height="8" viewBox="0 0 11 8"><path d="M5.5 1 L10 7 L1 7 Z" fill="#1a1a1a"/></svg>
<div style="left:1578px;top:231px;width:19px;height:241px;background:#fff;border:1px solid #9a9a9a"></div>
<div style="left:1578px;top:732px;width:19px;height:19px;background:#fff;border:1px solid #9a9a9a"></div>
<svg style="left:1582px;top:738px" width="11" height="8" viewBox="0 0 11 8"><path d="M1 1 L10 1 L5.5 7 Z" fill="#1a1a1a"/></svg>
<div style="left:0px;top:0px;width:1600px;height:157px;background:#f3f2f1;"></div>
<div style="left:0px;top:0px;width:68px;height:36px;background:#f8f8f8;"></div>
<div style="left:0;top:156px;width:1600px;height:8px;background:linear-gradient(#cdcdcd,#dadada 35%,#e6e6e6)"></div>
<span class="t" style="left:21.00px;top:8.20px;font-size:16.2px;letter-spacing:0.132px;color:#262626;-webkit-text-stroke:0.55px #262626;">File</span>
<span class="t" style="left:82.00px;top:8.20px;font-size:16.2px;letter-spacing:1.262px;color:#262626;-webkit-text-stroke:0.55px #262626;">Home</span>
<span class="t" style="left:156.00px;top:8.20px;font-size:16.2px;letter-spacing:0.497px;color:#404040;">Insert</span>
<span class="t" style="left:227.00px;top:8.20px;font-size:16.2px;letter-spacing:0.202px;color:#404040;">Page Layout</span>
<span class="t" style="left:348.50px;top:8.20px;font-size:16.2px;letter-spacing:0.141px;color:#404040;">Formulas</span>
<span class="t" style="left:445.50px;top:8.20px;font-size:16.2px;letter-spacing:0.094px;color:#404040;">Data</span>
<span class="t" style="left:509.00px;top:8.20px;font-size:16.2px;letter-spacing:-0.223px;color:#404040;">Review</span>
<span class="t" style="left:590.00px;top:8.20px;font-size:16.2px;letter-spacing:0.393px;color:#404040;">View</span>
<span class="t" style="left:654.00px;top:8.20px;font-size:16.2px;letter-spacing:0.395px;color:#404040;">Developer</span>
<span class="t" style="left:759.00px;top:8.20px;font-size:16.2px;letter-spacing:0.561px;color:#404040;">Help</span>
<span class="t" style="left:822.00px;top:8.20px;font-size:16.2px;letter-spacing:0.612px;color:#404040;">Acrobat</span>
<div style="left:82px;top:31px;width:48px;height:3px;background:#217346;border-radius:1px;"></div>
<div style="left:1349px;top:4px;width:125px;height:29px;background:#fff;border:1px solid #e4e2e0;border-radius:4px"></div>
<div style="left:1484px;top:4px;width:101px;height:29px;background:#fff;border:1px solid #e4e2e0;border-radius:4px"></div>
<span class="t" style="left:1379.50px;top:8.60px;font-size:16px;letter-spacing:0.735px;color:#217346;-webkit-text-stroke:0.5px #217346;">Comments</span>
<span class="t" style="left:1514.50px;top:8.60px;font-size:16px;letter-spacing:-0.049px;color:#217346;-webkit-text-stroke:0.5px #217346;">Share</span>
<span class="t" style="left:19.80px;top:86.50px;font-size:13.6px;letter-spacing:-0.544px;color:#404040;">Paste</span>
<span class="t" style="left:20.50px;top:136.70px;font-size:13px;letter-spacing:0.169px;color:#404040;">Clipboard</span>
<span class="t" style="left:241.00px;top:136.70px;font-size:13px;letter-spacing:-0.338px;color:#404040;">Font</span>
<span class="t" style="left:543.00px;top:136.70px;font-size:13px;letter-spacing:0.024px;color:#404040;">Alignment</span>
<span class="t" style="left:819.00px;top:136.70px;font-size:13px;letter-spacing:0.353px;color:#404040;">Number</span>
<span class="t" style="left:1053.00px;top:136.70px;font-size:13px;letter-spacing:-0.480px;color:#404040;">Styles</span>
<span class="t" style="left:1236.00px;top:136.70px;font-size:13px;letter-spacing:-0.474px;color:#404040;">Cells</span>
<span class="t" style="left:1380.00px;top:136.70px;font-size:13px;letter-spacing:0.042px;color:#404040;">Editing</span>
<span class="t" style="left:1505.00px;top:136.70px;font-size:13px;letter-spacing:-0.344px;color:#404040;">Analysis</span>
<span class="t" style="left:612.60px;top:56.80px;font-size:14.2px;letter-spacing:0.375px;color:#a6a4a2;">Wrap Text</span>
<span class="t" style="left:612.60px;top:96.40px;font-size:14.2px;letter-spacing:0.359px;color:#a6a4a2;">Merge &amp; Center</span>
<span class="t" style="left:968.20px;top:87.00px;font-size:14.2px;letter-spacing:0.545px;color:#a6a4a2;">Conditional</span>
<span class="t" style="left:963.70px;top:106.80px;font-size:14.2px;letter-spacing:0.404px;color:#a6a4a2;">Formatting</span>
<span class="t" style="left:1055.50px;top:87.00px;font-size:14.2px;letter-spacing:0.036px;color:#a6a4a2;">Format as</span>
<span class="t" style="left:1064.20px;top:106.80px;font-size:14.2px;letter-spacing:-0.237px;color:#a6a4a2;">Table</span>
<span class="t" style="left:1139.20px;top:87.00px;font-size:14.2px;letter-spacing:-0.054px;color:#a6a4a2;">Cell</span>
<span class="t" style="left:1125.70px;top:106.80px;font-size:14.2px;letter-spacing:-0.334px;color:#a6a4a2;">Styles</span>
<span class="t" style="left:1228.75px;top:44.65px;font-size:14.2px;letter-spacing:-0.103px;color:#a6a4a2;">Insert</span>
<span class="t" style="left:1228.75px;top:74.10px;font-size:14.2px;letter-spacing:0.451px;color:#a6a4a2;">Delete</span>
<span class="t" style="left:1228.75px;top:102.80px;font-size:14.2px;letter-spacing:0.266px;color:#262626;">Format</span>
<span class="t" style="left:1373.50px;top:86.75px;font-size:14.2px;letter-spacing:0.448px;color:#a6a4a2;">Sort &amp;</span>
<span class="t" style="left:1371.60px;top:106.60px;font-size:14.2px;letter-spacing:-0.051px;color:#a6a4a2;">Filter</span>
<span class="t" style="left:1428.40px;top:86.75px;font-size:14.2px;letter-spacing:0.312px;color:#262626;">Find &amp;</span>
<span class="t" style="left:1423.70px;top:106.60px;font-size:14.2px;letter-spacing:-0.093px;color:#262626;">Select</span>
<span class="t" style="left:1502.30px;top:86.75px;font-size:14.2px;letter-spacing:0.147px;color:#a6a4a2;">Analyze</span>
<span class="t" style="left:1512.60px;top:106.60px;font-size:14.2px;letter-spacing:0.268px;color:#a6a4a2;">Data</span>
<div style="left:130px;top:52px;width:144px;height:29px;background:#fff;border:1px solid #c8c6c4"></div>
<div style="left:276px;top:52px;width:62px;height:29px;background:#fff;border:1px solid #c8c6c4"></div>
<span class="t" style="left:133.40px;top:56.60px;font-size:14.4px;letter-spacing:0.248px;color:#2b2b2b;">Calibri</span>
<span class="t" style="left:280.40px;top:56.60px;font-size:13.6px;letter-spacing:-0.727px;color:#2b2b2b;">10</span>
<div style="left:767px;top:52px;width:174px;height:29px;background:#e1dfdd;border:1px solid #c8c6c4"></div>
<div style="left:924px;top:53px;width:1px;height:27px;background:#c8c6c4;"></div>
<span class="t" style="left:138.22px;top:94.50px;font-size:16px;font-weight:bold;color:#a6a4a2;">B</span>
<span class="t" style="left:168.5px;top:94.5px;font-size:17px;font-style:italic;font-family:'Liberation Serif',serif;color:#a6a4a2">I</span>
<span class="t" style="left:197.96px;top:94.00px;font-size:14.5px;color:#a6a4a2;">U</span>
<div style="left:197.5px;top:112px;width:11.5px;height:1.3px;background:#a6a4a2;"></div>
<span class="t" style="left:345.66px;top:54.50px;font-size:19px;color:#a6a4a2;">A</span>
<span class="t" style="left:377.16px;top:55.70px;font-size:16px;color:#a6a4a2;">A</span>
<span class="t" style="left:774.66px;top:95.50px;font-size:21px;color:#a6a4a2;">$</span>
<span class="t" style="left:820.90px;top:95.80px;font-size:21.5px;color:#a6a4a2;">%</span>
<span class="t" style="left:855.8px;top:65.2px;font-size:45px;font-weight:bold;line-height:50px;height:50px;font-family:'Liberation Serif',serif;color:#a6a4a2">,</span>
<span class="t" style="left:1327.94px;top:44.20px;font-size:23.5px;color:#a6a4a2;">Σ</span>
<span class="t" style="left:899.20px;top:89.90px;font-size:10.8px;color:#a6a4a2;">0</span>
<span class="t" style="left:891.30px;top:100.50px;font-size:10.8px;letter-spacing:-0.407px;color:#a6a4a2;">.00</span>
<span class="t" style="left:921.50px;top:89.90px;font-size:10.8px;letter-spacing:-0.407px;color:#a6a4a2;">.00</span>
<span class="t" style="left:928.80px;top:100.50px;font-size:10.8px;letter-spacing:-1.407px;color:#a6a4a2;">.0</span>
<div style="left:119px;top:42px;width:1px;height:109px;background:#c8c6c4;"></div>
<div style="left:407px;top:42px;width:1px;height:109px;background:#c8c6c4;"></div>
<div style="left:756px;top:42px;width:1px;height:109px;background:#c8c6c4;"></div>
<div style="left:950px;top:42px;width:1px;height:109px;background:#c8c6c4;"></div>
<div style="left:1189px;top:42px;width:1px;height:109px;background:#c8c6c4;"></div>
<div style="left:1310px;top:42px;width:1px;height:109px;background:#c8c6c4;"></div>
<div style="left:1489px;top:42px;width:1px;height:109px;background:#c8c6c4;"></div>
<div style="left:1566px;top:42px;width:1px;height:109px;background:#c8c6c4;"></div>
<div style="left:241px;top:92.5px;width:1px;height:27.0px;background:#d2d0ce;"></div>
<div style="left:297px;top:92.5px;width:1px;height:27.0px;background:#d2d0ce;"></div>
<div style="left:510px;top:52.5px;width:1px;height:27.0px;background:#d2d0ce;"></div>
<div style="left:510px;top:93px;width:1px;height:26.5px;background:#d2d0ce;"></div>
<div style="left:578px;top:48px;width:1px;height:74px;background:#d2d0ce;"></div>
<div style="left:878px;top:92.5px;width:1px;height:27.0px;background:#d2d0ce;"></div>
<svg style="left:0;top:0" width="1600" height="160" viewBox="0 0 1600 160"><path d="M32.60 113.80 L35.60 117.20 L38.60 113.80" stroke="#404040" stroke-width="1.3" fill="none" stroke-linecap="round" stroke-linejoin="round"/><path d="M95.60 84.90 L98.60 88.30 L101.60 84.90" stroke="#404040" stroke-width="1.3" fill="none" stroke-linecap="round" stroke-linejoin="round"/><path d="M263.00 65.60 L266.20 69.00 L269.40 65.60" stroke="#2b2b2b" stroke-width="1.5" fill="none" stroke-linecap="round" stroke-linejoin="round"/><path d="M326.60 65.60 L329.80 69.00 L333.00 65.60" stroke="#2b2b2b" stroke-width="1.5" fill="none" stroke-linecap="round" stroke-linejoin="round"/><path d="M223.70 105.20 L226.50 108.20 L229.30 105.20" stroke="#a6a4a2" stroke-width="1.2" fill="none" stroke-linecap="round" stroke-linejoin="round"/><path d="M279.70 105.20 L282.50 108.20 L285.30 105.20" stroke="#a6a4a2" stroke-width="1.2" fill="none" stroke-linecap="round" stroke-linejoin="round"/><path d="M335.70 105.20 L338.50 108.20 L341.30 105.20" stroke="#a6a4a2" stroke-width="1.2" fill="none" stroke-linecap="round" stroke-linejoin="round"/><path d="M384.70 105.20 L387.50 108.20 L390.30 105.20" stroke="#a6a4a2" stroke-width="1.2" fill="none" stroke-linecap="round" stroke-linejoin="round"/><path d="M545.70 65.00 L548.50 68.00 L551.30 65.00" stroke="#a6a4a2" stroke-width="1.2" fill="none" stroke-linecap="round" stroke-linejoin="round"/><path d="M732.60 105.20 L735.40 108.20 L738.20 105.20" stroke="#a6a4a2" stroke-width="1.2" fill="none" stroke-linecap="round" stroke-linejoin="round"/><path d="M929.70 65.30 L932.50 68.30 L935.30 65.30" stroke="#a6a4a2" stroke-width="1.2" fill="none" stroke-linecap="round" stroke-linejoin="round"/><path d="M800.10 105.00 L803.40 108.60 L806.70 105.00" stroke="#333" stroke-width="1.4" fill="none" stroke-linecap="round" stroke-linejoin="round"/><path d="M1041.90 113.70 L1044.70 116.70 L1047.50 113.70" stroke="#a6a4a2" stroke-width="1.2" fill="none" stroke-linecap="round" stroke-linejoin="round"/><path d="M1103.70 113.70 L1106.50 116.70 L1109.30 113.70" stroke="#a6a4a2" stroke-width="1.2" fill="none" stroke-linecap="round" stroke-linejoin="round"/><path d="M1168.90 113.70 L1171.70 116.70 L1174.50 113.70" stroke="#a6a4a2" stroke-width="1.2" fill="none" stroke-linecap="round" stroke-linejoin="round"/><path d="M1278.50 52.80 L1281.30 55.80 L1284.10 52.80" stroke="#a6a4a2" stroke-width="1.2" fill="none" stroke-linecap="round" stroke-linejoin="round"/><path d="M1286.40 82.10 L1289.20 85.10 L1292.00 82.10" stroke="#a6a4a2" stroke-width="1.2" fill="none" stroke-linecap="round" stroke-linejoin="round"/><path d="M1280.50 109.90 L1283.80 113.50 L1287.10 109.90" stroke="#262626" stroke-width="1.4" fill="none" stroke-linecap="round" stroke-linejoin="round"/><path d="M1353.80 52.50 L1357.30 56.30 L1360.80 52.50" stroke="#262626" stroke-width="1.4" fill="none" stroke-linecap="round" stroke-linejoin="round"/><path d="M1350.90 81.70 L1354.40 85.50 L1357.90 81.70" stroke="#262626" stroke-width="1.4" fill="none" stroke-linecap="round" stroke-linejoin="round"/><path d="M1351.70 110.70 L1354.50 113.70 L1357.30 110.70" stroke="#a6a4a2" stroke-width="1.2" fill="none" stroke-linecap="round" stroke-linejoin="round"/><path d="M1409.90 113.70 L1412.70 116.70 L1415.50 113.70" stroke="#a6a4a2" stroke-width="1.2" fill="none" stroke-linecap="round" stroke-linejoin="round"/><path d="M1468.30 113.40 L1471.40 117.00 L1474.50 113.40" stroke="#262626" stroke-width="1.4" fill="none" stroke-linecap="round" stroke-linejoin="round"/><path d="M1571.50 16.70 L1574.50 20.10 L1577.50 16.70" stroke="#217346" stroke-width="1.3" fill="none" stroke-linecap="round" stroke-linejoin="round"/><path d="M1577.5 150 L1584 143.8 L1590.5 150" stroke="#333" stroke-width="1.3" fill="none"/><path d="M105.5 147.5 V141.5 H111.5 M109.0 145.0 L114.5 150.5 M114.5 146.0 V150.5 H110.0" stroke="#8a8886" stroke-width="1" fill="none"/><path d="M393 147.5 V141.5 H399 M396.5 145.0 L402 150.5 M402 146.0 V150.5 H397.5" stroke="#8a8886" stroke-width="1" fill="none"/><path d="M742 147.5 V141.5 H748 M745.5 145.0 L751 150.5 M751 146.0 V150.5 H746.5" stroke="#8a8886" stroke-width="1" fill="none"/><path d="M936 147.5 V141.5 H942 M939.5 145.0 L945 150.5 M945 146.0 V150.5 H940.5" stroke="#8a8886" stroke-width="1" fill="none"/><path d="M359 60.6 L361.6 57.8 L364.2 60.6" stroke="#a6a4a2" stroke-width="1.1" fill="none"/><path d="M388.2 57.8 L390.6 60.4 L393 57.8" stroke="#a6a4a2" stroke-width="1.1" fill="none"/><rect x="22.8" y="51.6" width="25.4" height="29.2" rx="1" fill="#fbf3e6" stroke="#e9a23b" stroke-width="1.6"/><rect x="25" y="53.6" width="21" height="25" fill="#f3f2f1" stroke="#f3d6a4" stroke-width="0.8"/><path d="M28 55.6 V51.4 H32.6 A3.2 3.2 0 1 1 38.6 51.4 H45 V55.6 Z" fill="#f3f2f1" stroke="#8a8886" stroke-width="1.1"/><rect x="39.6" y="62.4" width="15.8" height="20.6" fill="#fafafa" stroke="#4a4a4a" stroke-width="1.3"/><path d="M72.7 46.6 L78.8 61.5 M80 46.6 L73.8 61.5" stroke="#4a4a4a" stroke-width="1.2" fill="none"/><circle cx="72.5" cy="63.4" r="2.1" fill="none" stroke="#5b9bd5" stroke-width="1.2"/><circle cx="79.7" cy="63.4" r="2.1" fill="none" stroke="#5b9bd5" stroke-width="1.2"/><path d="M73.5 92.4 H66.9 V76.8 H76.5 V79" stroke="#4a4a4a" stroke-width="1.2" fill="none"/><path d="M73.6 80.6 H81 L85.4 85 V95 H73.6 Z" stroke="#4a4a4a" stroke-width="1.2" fill="#f8f8f8"/><path d="M76.6 88.2 H82.6 M76.6 91 H82.6" stroke="#4a4a4a" stroke-width="1"/><path d="M66.9 114.4 L75.4 110 L80.2 116.2 L74.4 124.2 Z" fill="#f6cf94" stroke="#e8912d" stroke-width="1.4" stroke-linejoin="round"/><path d="M70 118 L77.6 120" stroke="#e8912d" stroke-width="1.2"/><path d="M75.6 109.6 L78.4 107.6 L83 113.6 L80.4 115.8 Z" fill="#f3f2f1" stroke="#4a4a4a" stroke-width="1.3" stroke-linejoin="round"/><path d="M81.2 109.6 L84.8 106.8" stroke="#4a4a4a" stroke-width="2.4" stroke-linecap="round"/><path d="M250.6 97 H268.4 M250.6 97 V112 M268.4 97 V112 M259.5 97 V112 M250.6 104.6 H268.4" stroke="#a6a4a2" stroke-width="1" stroke-dasharray="1.4 1.4" fill="none"/><path d="M250 113.4 H269" stroke="#a6a4a2" stroke-width="1.8"/><path d="M311.2 99.4 L316 96.6 L322.4 104.6 L314.6 109.4 L308.4 103.8 L314.2 98 M316.4 96.8 C313.6 96.6 313.4 99.6 314 101.4 M322.6 104.6 C324.4 106.2 324.6 108.2 323.4 109" stroke="#a6a4a2" stroke-width="1.2" fill="none" stroke-linejoin="round"/><rect x="306" y="111.4" width="20" height="4.2" fill="#b3b0ad"/><rect x="355" y="111.4" width="20" height="4.2" fill="#b3b0ad"/><text x="365" y="109.6" text-anchor="middle" font-family="Liberation Sans, sans-serif" font-size="17.6" fill="#a6a4a2">A</text><path d="M423.0 56.8 H441.0 M427.6 61.7 H438.0 M423.0 66.9 H441.0" stroke="#a6a4a2" stroke-width="1.3" fill="none"/><path d="M453.2 60.3 H470.8 M457.2 65.3 H468.0 M453.2 70.4 H470.8" stroke="#a6a4a2" stroke-width="1.3" fill="none"/><path d="M483.0 64.9 H501.0 M486.6 70.0 H498.0 M483.0 75.2 H501.0" stroke="#a6a4a2" stroke-width="1.3" fill="none"/><path d="M423.0 97.8 H441.0 M423.0 103.0 H436.0 M423.0 108.1 H441.0 M423.0 113.2 H436.0" stroke="#a6a4a2" stroke-width="1.3" fill="none"/><path d="M453.2 97.8 H470.8 M456.2 103.0 H467.6 M453.2 108.1 H470.8 M456.2 113.2 H467.6" stroke="#a6a4a2" stroke-width="1.3" fill="none"/><path d="M483.0 97.8 H501.0 M488.4 103.0 H501.0 M483.0 108.1 H501.0 M488.4 113.2 H501.0" stroke="#a6a4a2" stroke-width="1.3" fill="none"/><path d="M520.0 97.8 H538.0 M531.0 103.0 H538.0 M531.0 108.1 H538.0 M520.0 113.2 H538.0" stroke="#a6a4a2" stroke-width="1.3" fill="none"/><path d="M550.0 97.8 H568.0 M560.6 103.0 H568.0 M560.6 108.1 H568.0 M550.0 113.2 H568.0" stroke="#a6a4a2" stroke-width="1.3" fill="none"/><path d="M528.6 105.6 H520.8 M523.6 102.8 L520.8 105.6 L523.6 108.4" stroke="#a6a4a2" stroke-width="1.1" fill="none"/><path d="M550.4 105.6 H558.2 M555.4 102.8 L558.2 105.6 L555.4 108.4" stroke="#a6a4a2" stroke-width="1.1" fill="none"/><text transform="translate(523 70.4) rotate(-45)" font-family="Liberation Sans, sans-serif" font-size="12.5" fill="#a6a4a2">ab</text><path d="M526 74 L538.4 61.6 M534.2 61.4 H538.6 V65.8" stroke="#a6a4a2" stroke-width="1.1" fill="none"/><text x="590.8" y="65.2" font-family="Liberation Sans, sans-serif" font-size="11.5" fill="#a6a4a2">ab</text><text x="590.8" y="74.6" font-family="Liberation Sans, sans-serif" font-size="11.5" fill="#a6a4a2">c</text><path d="M603 66.4 C608.6 66.4 608.6 72.6 603.6 72.6 H598.6 M601.2 70 L598.6 72.6 L601.2 75.2" stroke="#a6a4a2" stroke-width="1.1" fill="none"/><rect x="588.7" y="96.9" width="17.6" height="17.2" fill="none" stroke="#a6a4a2" stroke-width="1.4"/><path d="M588.7 100.8 H606.3 M588.7 110.2 H606.3 M597.5 96.9 V100.8 M597.5 110.2 V114.1" stroke="#a6a4a2" stroke-width="1.1" fill="none"/><path d="M591.4 105.5 H603.6 M593.6 103.4 L591.4 105.5 L593.6 107.6 M601.4 103.4 L603.6 105.5 L601.4 107.6" stroke="#a6a4a2" stroke-width="1" fill="none"/><rect x="996.4" y="50.8" width="15.6" height="8.4" fill="#cfcdcb"/><rect x="996.4" y="59.6" width="9.6" height="8.4" fill="#cfcdcb"/><rect x="996.4" y="68.6" width="17" height="8.4" fill="#cfcdcb"/><rect x="989.9" y="50.7" width="34" height="26.4" fill="none" stroke="#a6a4a2" stroke-width="1.3"/><path d="M989.9 59.4 H1023.9 M989.9 68.3 H1023.9 M996.2 50.7 V77.1 M1017.2 50.7 V77.1 M1012 50.7 V59.4 M1006 59.4 V68.3 M1013.4 68.3 V77.1" stroke="#a6a4a2" stroke-width="1" fill="none"/><rect x="1082.6" y="59.6" width="22.4" height="17.2" fill="#cfcdcb"/><rect x="1070.9" y="50.7" width="34.2" height="26.4" fill="#f6f5f4" fill-opacity="0" stroke="#a6a4a2" stroke-width="1.3"/><path d="M1070.9 59.4 H1105.1 M1070.9 68.3 H1105.1 M1082.5 50.7 V77.1 M1093.8 50.7 V77.1" stroke="#a6a4a2" stroke-width="1" fill="none"/><path d="M1106.6 59.4 C1108.6 58.4 1109.2 60.4 1108 61.8 L1093 78.6 L1089.6 75.8 Z" fill="#e9e8e7" stroke="#a6a4a2" stroke-width="1.1" stroke-linejoin="round"/><path d="M1089.4 75.8 L1093 78.8 C1092 82.6 1085 84 1080.6 82 C1084.6 81.4 1085.6 77.4 1089.4 75.8 Z" fill="#cfcdcb" stroke="#a6a4a2" stroke-width="1.1" stroke-linejoin="round"/><rect x="1140.6" y="55.8" width="21.4" height="15" fill="#cfcdcb"/><rect x="1133.9" y="50.7" width="34.4" height="26.4" fill="none" stroke="#a6a4a2" stroke-width="1.3"/><path d="M1133.9 55.6 H1168.3 M1133.9 71 H1168.3 M1140.4 50.7 V77.1 M1162.2 50.7 V77.1" stroke="#a6a4a2" stroke-width="1" fill="none"/><path d="M1169.6 59.4 C1171.6 58.4 1172.2 60.4 1171 61.8 L1156 78.6 L1152.6 75.8 Z" fill="#e9e8e7" stroke="#a6a4a2" stroke-width="1.1" stroke-linejoin="round"/><path d="M1152.4 75.8 L1156 78.8 C1155 82.6 1148 84 1143.6 82 C1147.6 81.4 1148.6 77.4 1152.4 75.8 Z" fill="#cfcdcb" stroke="#a6a4a2" stroke-width="1.1" stroke-linejoin="round"/><rect x="1204.6" y="45.8" width="18.6" height="16.6" fill="none" stroke="#a6a4a2" stroke-width="1.3"/><path d="M1204.6 51.3 H1223.2 M1204.6 56.9 H1223.2 M1210.8 45.8 V62.4 M1217 45.8 V62.4" stroke="#a6a4a2" stroke-width="1.1" fill="none"/><rect x="1211" y="51.4" width="12" height="5.4" fill="#cfcdcb"/><rect x="1203.6" y="50.8" width="7" height="6.6" fill="#f3f2f1"/><path d="M1212.6 54.1 H1204.4 M1207.4 51 L1204.4 54.1 L1207.4 57.2" stroke="#a6a4a2" stroke-width="1.1" fill="none"/><rect x="1204.6" y="74.9" width="18.6" height="16.6" fill="none" stroke="#a6a4a2" stroke-width="1.3"/><path d="M1204.6 80.4 H1223.2 M1204.6 86.0 H1223.2 M1210.8 74.9 V91.5 M1217 74.9 V91.5" stroke="#a6a4a2" stroke-width="1.1" fill="none"/><rect x="1207.6" y="80.6" width="8" height="5.4" fill="#cfcdcb" stroke="#a6a4a2" stroke-width="1"/><rect x="1215.6" y="79.4" width="8.6" height="8" fill="#f3f2f1"/><path d="M1216.6 80.2 L1222.8 86.4 M1222.8 80.2 L1216.6 86.4" stroke="#a6a4a2" stroke-width="1.1" fill="none"/><rect x="1204.6" y="105" width="18.6" height="16.4" fill="#e3f1fb"/><rect x="1209.6" y="110.2" width="8.6" height="6" fill="#3a8ee0"/><path d="M1204.6 110.4 H1223.2 M1204.6 116 H1223.2 M1209.6 105 V121.4 M1218.2 105 V121.4" stroke="#333" stroke-width="1.1" fill="none"/><rect x="1204.6" y="105" width="18.6" height="16.4" fill="none" stroke="#333" stroke-width="1.3"/><path d="M1208.6 102 V105 M1219.4 102 V105 M1208.6 103.4 H1219.4" stroke="#2b88d8" stroke-width="1.2" fill="none"/><rect x="1325.7" y="74.9" width="18.8" height="16.4" fill="#fafafa" stroke="#333" stroke-width="1.4"/><rect x="1325.7" y="74.9" width="18.8" height="3" fill="#6a6a6a"/><path d="M1335.1 80 V89 M1331.2 85.2 L1335.1 89.2 L1339 85.2" stroke="#2f8fd0" stroke-width="1.3" fill="none"/><path d="M1326 113.6 L1337.2 103.6 L1343.8 110.4 L1332.6 120.6 Z" fill="none" stroke="#a6a4a2" stroke-width="1.2" stroke-linejoin="round"/><path d="M1326 113.6 L1331 109.2 L1337.6 116 L1332.6 120.6 Z" fill="#cfcdcb" stroke="#a6a4a2" stroke-width="1.2" stroke-linejoin="round"/><text x="1377.4" y="61.8" font-family="Liberation Sans, sans-serif" font-size="17.6" fill="#a6a4a2">A</text><text x="1378" y="79.9" font-family="Liberation Sans, sans-serif" font-size="18.6" fill="#a6a4a2">Z</text><path d="M1393.2 56 H1412.2 C1410 62 1405.4 63 1405.4 67.4 V74 H1400.2 V67.4 C1400.2 63 1395.4 62 1393.2 56 Z" fill="none" stroke="#a6a4a2" stroke-width="1.3" stroke-linejoin="round"/><circle cx="1454.3" cy="59.7" r="12.4" fill="#fafafa" stroke="#3b3b3b" stroke-width="1.5"/><path d="M1445.2 68.6 L1432 81.8" stroke="#3b3b3b" stroke-width="1.6" stroke-linecap="round"/><rect x="1508.8" y="44.8" width="38.4" height="37.8" fill="#eeedec" stroke="#a6a4a2" stroke-width="1.4"/><rect x="1508.8" y="44.8" width="38.4" height="5.4" fill="#cfcdcb"/><path d="M1508.8 50.4 H1547.2 M1508.8 61 H1547.2 M1508.8 71.6 H1547.2 M1521.6 50.4 V82.6 M1534.4 50.4 V82.6" stroke="#a6a4a2" stroke-width="1" fill="none" stroke-opacity="0.6"/><circle cx="1526.5" cy="60.8" r="11.8" fill="#f1f0ef" stroke="#a6a4a2" stroke-width="1.6"/><rect x="1519.6" y="59" width="4.2" height="7.4" fill="#cfcdcb"/><rect x="1524.4" y="53.6" width="4.4" height="12.8" fill="#cfcdcb" stroke="#a6a4a2" stroke-width="0.6"/><rect x="1529.4" y="57" width="4.2" height="9.4" fill="#cfcdcb"/><path d="M1535 69.4 L1547 82.6" stroke="#a6a4a2" stroke-width="1.8"/><path d="M1360.8 12 H1372.6 V21 H1366 L1363.2 24.2 V21 H1360.8 Z" fill="none" stroke="#217346" stroke-width="1.2" stroke-linejoin="round"/><path d="M1498.8 15.8 H1494.4 V25.2 H1505.6 V22.6" fill="none" stroke="#4d7a62" stroke-width="1.2"/><path d="M1497.6 22 C1497.8 18.2 1500 16.2 1503 15.9 V13.2 L1507.6 17 L1503 20.8 V18.4 C1500.8 18.5 1499 19.6 1497.6 22 Z" fill="none" stroke="#217346" stroke-width="1.1" stroke-linejoin="round"/><path d="M897 101.2 H887.8 M891 98 L887.8 101.2 L891 104.4" stroke="#a6a4a2" stroke-width="1.1" fill="none"/><path d="M917.6 111.4 H926.8 M923.6 108.2 L926.8 111.4 L923.6 114.6" stroke="#a6a4a2" stroke-width="1.1" fill="none"/></svg>
<div style="left:6px;top:169px;width:127px;height:30px;background:#fff;border:1px solid #cfcfcf"></div>
<span class="t" style="left:13.60px;top:174.60px;font-size:15px;letter-spacing:-1.547px;color:#3a3a3a;">E9</span>
<svg style="left:116px;top:181px" width="10" height="6" viewBox="0 0 10 6"><path d="M1 0.8 H8.6 L4.8 5 Z" fill="#6e6e6e"/></svg>
<div style="left:150.6px;top:177.6px;width:2.2px;height:2.2px;background:#b4b4b4;"></div>
<div style="left:150.6px;top:183.2px;width:2.2px;height:2.2px;background:#b4b4b4;"></div>
<div style="left:150.6px;top:188.8px;width:2.2px;height:2.2px;background:#b4b4b4;"></div>
<div style="left:170px;top:169px;width:137px;height:30px;background:#fff;border:1px solid #cfcfcf"></div>
<svg style="left:180px;top:172px" width="120" height="24" viewBox="180 172 120 24"><path d="M186 178 L199.4 191 M199.4 178 L186 191" stroke="#c2c2c2" stroke-width="1.6" fill="none"/><path d="M230.6 185.4 L235.6 190.4 L245.4 178.6" stroke="#c2c2c2" stroke-width="2" fill="none"/></svg>
<span class="t" style="left:273.6px;top:172.6px;font-size:21px;font-style:italic;font-weight:bold;font-family:'Liberation Serif',serif;color:#6a6a6a;letter-spacing:-0.5px">f<span class="rel" style="font-size:15px;position:static">x</span></span>
<div style="left:310px;top:169px;width:1284px;height:30px;background:#fff;border:1px solid #cfcfcf"></div>
<span class="t" style="left:324.40px;top:175.00px;font-size:15.4px;letter-spacing:0.469px;color:#333;">=Conditions!B37</span>
<svg style="left:1578px;top:180px" width="12" height="8" viewBox="0 0 12 8"><path d="M1.4 1.4 L5.8 5.8 L10.2 1.4" stroke="#6a6a6a" stroke-width="2.2" fill="none"/></svg>
<div style="left:0px;top:751px;width:1600px;height:29px;background:#e6e6e6;"></div>
<div style="left:0px;top:750px;width:1600px;height:1px;background:#c8c8c8;"></div>
<div style="left:0px;top:779px;width:1600px;height:1px;background:#cfcfcf;"></div>
<svg style="left:20px;top:756px" width="60" height="18" viewBox="20 756 60 18"><path d="M32.6 759.6 L28.4 764.4 L32.6 769.2 Z M56.6 759.6 L60.8 764.4 L56.6 769.2 Z" fill="#c6c6c6"/></svg>
<div style="left:103px;top:754px;width:1px;height:21px;background:#b5b5b5;"></div>
<span class="t" style="left:117.00px;top:752.30px;font-size:17px;letter-spacing:0.186px;color:#444;">Conditions</span>
<div style="left:213px;top:750px;width:88px;height:24px;background:#fff;"></div>
<div style="left:213px;top:773px;width:88px;height:2.4px;background:#217346;"></div>
<span class="t" style="left:226.00px;top:752.30px;font-size:15.6px;letter-spacing:-0.167px;font-weight:bold;color:#1e6b41;">Analysis</span>
<svg style="left:333px;top:755px" width="22" height="22" viewBox="0 0 22 22"><circle cx="11" cy="10.6" r="9" fill="none" stroke="#c6c6c6" stroke-width="1.2"/><path d="M6.4 10.6 H15.6 M11 6 V15.2" stroke="#c6c6c6" stroke-width="1.4"/></svg>
<div style="left:957px;top:759px;width:2.4px;height:2.4px;background:#b8b8b8;"></div>
<div style="left:957px;top:763.5px;width:2.4px;height:2.4px;background:#b8b8b8;"></div>
<div style="left:957px;top:768px;width:2.4px;height:2.4px;background:#b8b8b8;"></div>
<div style="left:975px;top:755px;width:599px;height:19px;background:#f0f0f0;"></div>
<div style="left:975px;top:755px;width:19px;height:19px;background:#fff;border:1px solid #9a9a9a"></div>
<svg style="left:980px;top:759px" width="8" height="11" viewBox="0 0 8 11"><path d="M7 1 L7 10 L1 5.5 Z" fill="#1a1a1a"/></svg>
<div style="left:993px;top:755px;width:456px;height:19px;background:#fff;border:1px solid #9a9a9a"></div>
<div style="left:1556px;top:755px;width:19px;height:19px;background:#fff;border:1px solid #9a9a9a"></div>
<svg style="left:1562px;top:759px" width="8" height="11" viewBox="0 0 8 11"><path d="M1 1 L1 10 L7 5.5 Z" fill="#1a1a1a"/></svg>
<div style="left:0px;top:780px;width:1600px;height:26px;background:#f3f2f1;"></div>
<span class="t" style="left:9.40px;top:784.00px;font-size:12.8px;letter-spacing:-0.250px;color:#444;">Ready</span>
<span class="t" style="left:132.40px;top:784.00px;font-size:12.6px;letter-spacing:0.018px;color:#444;">Accessibility: Investigate</span>
<div style="left:1228px;top:780px;width:50px;height:26px;background:#c9c8c7;"></div>
<svg style="left:0;top:780px" width="1600" height="26" viewBox="0 780 1600 26"><path d="M87.2 792 V785.9 H70.8 V800 H76.6" fill="none" stroke="#4f4f4f" stroke-width="1.3"/><path d="M70.8 788.6 H87.2" stroke="#4f4f4f" stroke-width="1.1"/><path d="M73.2 791 H76.4 M73.2 793.8 H75 M73.2 796.4 H75" stroke="#4f4f4f" stroke-width="1.1"/><circle cx="82.2" cy="796" r="5" fill="#f3f2f1" stroke="#4f4f4f" stroke-width="1.3"/><circle cx="82.2" cy="796" r="2.4" fill="#4f4f4f"/><circle cx="117.8" cy="787" r="2.1" fill="none" stroke="#4f4f4f" stroke-width="1.2"/><path d="M111 788 C110.4 789 111 789.8 112 790 L115.4 791.2 C115.6 795 114.6 798 113 800.6 C112.8 801.6 114.2 802 114.8 801.2 L117.6 796.4 L119 798.4 M120.2 793.6 L120.2 791.2 L123.6 790 C124.6 789.8 125.2 789 124.6 788 C124 787.4 123.2 787.6 122.4 788 L120 789 H115.6 L113.2 788 C112.4 787.6 111.6 787.4 111 788 Z" stroke="#4f4f4f" stroke-width="1.1" fill="none" stroke-linejoin="round" stroke-linecap="round"/><path d="M120 793.2 L127.4 801.4 M127.4 793.2 L120 801.4" stroke="#4f4f4f" stroke-width="1.2"/><path d="M1244.5 785 H1259.5 V800 H1244.5 Z M1249.5 785 V800 M1254.5 785 V800 M1244.5 790 H1259.5 M1244.5 795 H1259.5" stroke="#4f4f4f" stroke-width="1.3" fill="none"/><rect x="1294.6" y="785" width="16.8" height="15" fill="none" stroke="#4f4f4f" stroke-width="1.3"/><rect x="1298.4" y="788.2" width="9.2" height="8.8" fill="none" stroke="#4f4f4f" stroke-width="1.1"/><path d="M1300.4 791 H1305.6 M1300.4 793.2 H1305.6 M1300.4 795.2 H1305.6" stroke="#4f4f4f" stroke-width="0.9"/><path d="M1344.8 785 H1361.2 V800 H1344.8 Z M1349.4 785 V792.6 H1355.8 V785" stroke="#4f4f4f" stroke-width="1.3" fill="none"/><path d="M1385.4 793.2 H1393.6" stroke="#4f4f4f" stroke-width="1.2"/><path d="M1401 793.2 H1526" stroke="#6a6a6a" stroke-width="1"/><path d="M1463.5 789.6 V797" stroke="#6a6a6a" stroke-width="1"/><rect x="1448.2" y="785.6" width="5.6" height="15" rx="0.8" fill="#3a3a3a"/><path d="M1532.4 793.2 H1541.4 M1536.9 788.7 V797.7" stroke="#4f4f4f" stroke-width="1.2"/></svg>
<span class="t" style="left:1558.00px;top:784.00px;font-size:12.6px;letter-spacing:-0.609px;color:#444;">80%</span>
</body></html>
